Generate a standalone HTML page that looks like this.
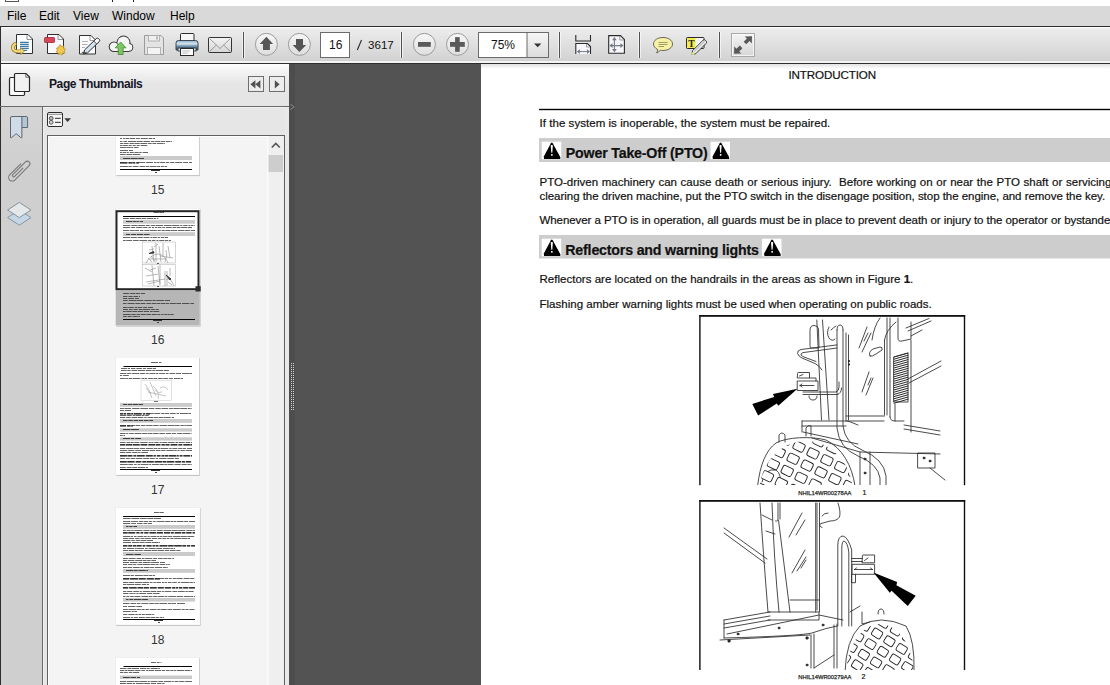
<!DOCTYPE html>
<html><head><meta charset="utf-8">
<style>
*{box-sizing:border-box}
html,body{margin:0;padding:0}
body{width:1110px;height:685px;overflow:hidden;position:relative;background:#fff;font-family:"Liberation Sans",sans-serif;color:#000}
.a{position:absolute}
#title{left:0;top:0;width:1110px;height:6px;background:#fff}
#menu{left:0;top:6px;width:1110px;height:20px;background:#d9d9d9}
.mi{position:absolute;top:4px;font-size:12px;line-height:12px;color:#000}
#tb{left:0;top:26px;width:1110px;height:38px;border-top:1px solid #2e2e2e;border-bottom:1px solid #2e2e2e;border-left:1px solid #2e2e2e;background:linear-gradient(#fafafa 0,#fafafa 1px,#ececec 2px,#e2e2e2 40%,#d2d2d2 95%,#f4f4f4 95%)}
.sep{position:absolute;top:32px;width:1px;height:25px;background:#3c3c3c}
#doc{left:289px;top:64px;width:192px;height:621px;background:#535353}
#page{left:481px;top:64px;width:629px;height:621px;background:#fff}
#panel{left:0;top:64px;width:289px;height:621px;background:#e6e6e6;border-left:1px solid #2e2e2e}
#nav{left:1px;top:107px;width:41px;height:578px;background:linear-gradient(#d6d6d6,#cfcfcf 60px)}
.t{position:absolute;white-space:pre;font-size:11.5px;line-height:12px;color:#111;-webkit-text-stroke:0.2px #111}
</style></head><body>
<div id="title" class="a"></div>
<div class="a" style="left:5px;top:-10px;width:14px;height:12px;border:1px solid #555"></div>
<div class="a" style="left:112px;top:0;width:1px;height:2px;background:#222"></div>
<div class="a" style="left:133px;top:0;width:1px;height:2px;background:#222"></div>

<div id="menu" class="a">
 <span class="mi" style="left:7px">File</span>
 <span class="mi" style="left:39px">Edit</span>
 <span class="mi" style="left:73px">View</span>
 <span class="mi" style="left:112px">Window</span>
 <span class="mi" style="left:170px">Help</span>
</div>

<div id="tb" class="a"></div>
<svg class="a" style="left:0;top:0" width="1110" height="64" viewBox="0 0 1110 64">
<defs>
<linearGradient id="gcirc" x1="0" y1="0" x2="0" y2="1"><stop offset="0" stop-color="#f7f7f7"/><stop offset="1" stop-color="#dedede"/></linearGradient>
<linearGradient id="gdd" x1="0" y1="0" x2="0" y2="1"><stop offset="0" stop-color="#f6f6f6"/><stop offset="1" stop-color="#dcdcdc"/></linearGradient>
<linearGradient id="gprn" x1="0" y1="0" x2="0" y2="1"><stop offset="0" stop-color="#8aa9c2"/><stop offset="0.35" stop-color="#d8e6f0"/><stop offset="0.6" stop-color="#6d90ad"/><stop offset="1" stop-color="#3f5e78"/></linearGradient>
<linearGradient id="gfs" x1="0" y1="0" x2="0" y2="1"><stop offset="0" stop-color="#f4f4f4"/><stop offset="1" stop-color="#d6d6d6"/></linearGradient>
</defs>
<!-- icon1 create -->
<path d="M16.5 34.5 H28 L32.5 39 V53.5 H16.5 Z" fill="#fbfdff" stroke="#2f2f2f" stroke-width="1"/>
<path d="M27 35 V39.5 H32" fill="none" stroke="#777" stroke-width="0.8"/>
<g stroke="#3d7aa8" stroke-width="1.3"><path d="M20 42.3H28.8M20 44.4H28.8M20 46.4H28.8M20 48.4H28.8M23 50.3H27"/></g>
<path d="M15 44 Q11.9 46.6 13.4 49.5 Q15 52 20 51.3" fill="none" stroke="#a08032" stroke-width="3.8" stroke-linecap="round"/>
<path d="M15 44 Q11.9 46.6 13.4 49.5 Q15 52 20 51.3" fill="none" stroke="#f4d87c" stroke-width="2.2" stroke-linecap="round"/>
<path d="M24.4 51 L20.4 47.6 L20.9 54.6 Z" fill="#f4d87c" stroke="#a08032" stroke-width="0.8" stroke-linejoin="round"/>
<path d="M19.4 51.4 L21.2 51.2" stroke="#f4d87c" stroke-width="2.2"/>
<!-- icon2 pdf -->
<path d="M47.5 34.5 H59 L63.5 39 V53.5 H47.5 Z" fill="#fbfbff" stroke="#2f2f2f" stroke-width="1"/>
<path d="M58 35 V39.5 H63" fill="none" stroke="#777" stroke-width="0.8"/>
<rect x="44.5" y="37.5" width="10" height="5" rx="0.8" fill="#d9465c" stroke="#9b2634" stroke-width="0.8"/>
<path d="M60.4 44.8 L61.6 46.6 L63.8 46 L63.6 48.2 L65.6 49.4 L64.1 51 L64.9 53.1 L62.7 53.2 L61.8 55.3 L60.4 53.7 L58.4 54.7 L58.1 52.5 L56 51.8 L57.4 50.1 L56.5 48 L58.7 47.8 L59.1 45.6 Z" fill="#f2c94c" stroke="#b08a2c" stroke-width="0.7"/>
<!-- icon3 edit -->
<path d="M79.5 35.5 H91 L95.5 40 V54 H79.5 Z" fill="#fbfbfb" stroke="#333" stroke-width="1"/>
<path d="M90 36 V40.5 H95" fill="none" stroke="#888" stroke-width="0.8"/>
<g stroke="#a0a0a0" stroke-width="0.8"><path d="M82 41.5H88M82 44.5H87.5M82 47.5H85"/></g>
<path d="M84.5 50 L96.3 38.6 Q97.5 37.6 98.6 38.7 L99.3 39.4 Q100.3 40.5 99.2 41.6 L87.4 53 L83.6 54 Z" fill="#d3e3f0"/>
<path d="M93.8 41 L96.3 38.6 Q97.5 37.6 98.6 38.7 L99.3 39.4 Q100.3 40.5 99.2 41.6 L96.7 44 Z" fill="#fafafa"/>
<path d="M84.5 50 L96.3 38.6 Q97.5 37.6 98.6 38.7 L99.3 39.4 Q100.3 40.5 99.2 41.6 L87.4 53 L83.6 54 Z" fill="none" stroke="#252a30" stroke-width="1"/>
<path d="M93.8 41 L96.7 44" stroke="#252a30" stroke-width="0.8"/>
<path d="M81.8 52.8 Q83 51.5 84 52.6 Q85 53.6 86.5 52" fill="none" stroke="#333" stroke-width="0.9"/>
<!-- icon4 cloud -->
<g fill="#3a3a3a"><circle cx="114" cy="46.8" r="5.3"/><circle cx="123.5" cy="42.6" r="7"/><circle cx="129" cy="47.4" r="4.3"/><rect x="114" y="46" width="15" height="6"/></g>
<g fill="#f5f5f5"><circle cx="114" cy="46.8" r="4.3"/><circle cx="123.5" cy="42.6" r="6"/><circle cx="129" cy="47.4" r="3.3"/><rect x="114" y="45" width="15" height="6"/></g>
<path d="M120.6 42 L126 47.8 H123.1 V54.5 H118.2 V47.8 H115.2 Z" fill="#7cc560" stroke="#3f8a2e" stroke-width="0.8"/>
<!-- icon5 floppy -->
<path d="M144.5 35.5 H161 L163.5 38 V54.5 H144.5 Z" fill="#e3e3e3" stroke="#9b9b9b" stroke-width="1"/>
<rect x="148.5" y="35.5" width="11" height="5.5" fill="#efefef" stroke="#a5a5a5" stroke-width="0.8"/>
<rect x="156" y="36.5" width="2" height="3" fill="#b5b5b5"/>
<rect x="147.5" y="47.5" width="13" height="7" fill="#f3f3f3" stroke="#a5a5a5" stroke-width="0.8"/>
<!-- icon6 printer -->
<rect x="180.5" y="33.5" width="13.5" height="9" rx="1" fill="#f6f6f6" stroke="#2c2c2c" stroke-width="1"/>
<path d="M178.5 40.5 H195.5 Q198 40.5 198 43 V50 H176 V43 Q176 40.5 178.5 40.5 Z" fill="url(#gprn)" stroke="#2c3a46" stroke-width="0.9"/>
<rect x="178" y="48" width="18" height="3" fill="#dfe6ec" stroke="#2c2c2c" stroke-width="0.8"/>
<rect x="180.5" y="48.5" width="13" height="7" fill="#fafafa" stroke="#2c2c2c" stroke-width="1"/>
<path d="M182.5 51H190M182.5 53H188" stroke="#9a9a9a" stroke-width="0.6"/>
<!-- icon7 mail -->
<rect x="208.5" y="37.5" width="23" height="15" rx="1" fill="url(#gfs)" stroke="#333" stroke-width="1"/>
<path d="M209.5 38.5 L220 48.5 L230.5 38.5 M209.5 51.5 L216.5 45 M230.5 51.5 L223.5 45" fill="none" stroke="#888" stroke-width="0.8"/>
<!-- sep -->
<rect x="242" y="32" width="3" height="26" fill="#f8f8f8" fill-opacity="0.8"/><rect x="243" y="32" width="1" height="26" fill="#505050"/>
<!-- up/down circles -->
<circle cx="266.4" cy="44.4" r="11" fill="url(#gcirc)" stroke="#9b9b9b" stroke-width="1"/>
<path d="M266.4 36.7 L273.1 44 H269.9 V50 H263 V44 H259.7 Z" fill="#565656"/>
<circle cx="299.4" cy="44.4" r="11" fill="url(#gcirc)" stroke="#9b9b9b" stroke-width="1"/>
<path d="M296 39 H303 V45 H306.2 L299.4 52 L292.7 45 H296 Z" fill="#565656"/>
<!-- page box -->
<rect x="320.5" y="32.5" width="29" height="25" fill="#fff" stroke="#6b6b6b" stroke-width="1"/>
<!-- sep -->
<rect x="400" y="32" width="3" height="26" fill="#f8f8f8" fill-opacity="0.8"/><rect x="401" y="32" width="1" height="26" fill="#505050"/>
<!-- minus/plus -->
<circle cx="424.4" cy="44.4" r="11" fill="url(#gcirc)" stroke="#9b9b9b" stroke-width="1"/>
<rect x="418" y="42" width="12.8" height="4.8" fill="#5a5a5a"/>
<circle cx="457.5" cy="44.4" r="11" fill="url(#gcirc)" stroke="#9b9b9b" stroke-width="1"/>
<rect x="450" y="42" width="14.8" height="4.8" fill="#5a5a5a"/>
<rect x="455.1" y="37.1" width="4.6" height="14.7" fill="#5a5a5a"/>
<!-- zoom box -->
<rect x="478.5" y="32.5" width="70" height="25" fill="#fff" stroke="#6b6b6b" stroke-width="1"/>
<rect x="527" y="33" width="21" height="24" fill="url(#gdd)"/>
<rect x="526.5" y="33" width="1" height="24" fill="#6b6b6b"/>
<path d="M534 43.4 H541.4 L537.7 47.2 Z" fill="#333"/>
<!-- sep -->
<rect x="558" y="32" width="3" height="26" fill="#f8f8f8" fill-opacity="0.8"/><rect x="559" y="32" width="1" height="26" fill="#505050"/>
<!-- fit width -->
<path d="M575.8 35 V41 H590.5 V35" fill="none" stroke="#2a2a2a" stroke-width="1.1"/>
<path d="M575.8 54 V43.5 H587.5 L590.5 46.5 V54" fill="#f7f7fb" stroke="#2a2a2a" stroke-width="1.1"/>
<path d="M586.5 44 V47 H590" fill="none" stroke="#777" stroke-width="0.7"/>
<path d="M579 51.6 H588" stroke="#737a88" stroke-width="1"/>
<path d="M576.8 51.6 L579.8 49.2 V54 Z M590 51.6 L587 49.2 V54 Z" fill="#737a88"/>
<!-- fit page -->
<path d="M608.7 35.6 H620.5 L624.4 39.5 V53.3 H608.7 Z" fill="#f7f7fb" stroke="#2a2a2a" stroke-width="1.1"/>
<path d="M619.8 36 V40 H624" fill="none" stroke="#777" stroke-width="0.7"/>
<path d="M614.4 39 V50.5 M611 45.6 H622" stroke="#737a88" stroke-width="1.1" fill="none"/>
<path d="M614.4 37 L616.8 40.2 H612 Z M614.4 52.2 L616.8 49 H612 Z M609.3 45.6 L612.5 43.2 V48 Z M623.6 45.6 L620.4 43.2 V48 Z" fill="#737a88"/>
<!-- sep -->
<rect x="638" y="32" width="3" height="26" fill="#f8f8f8" fill-opacity="0.8"/><rect x="639" y="32" width="1" height="26" fill="#505050"/>
<!-- comment -->
<path d="M663 37.5 C668.5 37.5 672.5 40.3 672.5 44 C672.5 47.7 668.5 50.5 663 50.5 C662 50.5 661 50.4 660.2 50.2 Q658.5 52.8 656.6 52.8 Q657.8 51 657.8 49.6 C655 48.2 653.5 46.2 653.5 44 C653.5 40.3 657.5 37.5 663 37.5 Z" fill="#f6f1a6" stroke="#5a5a4a" stroke-width="0.9"/>
<path d="M658.5 42.5 H667.5 M658.5 44.5 H667.5 M658.5 46.5 H664" stroke="#8a8a50" stroke-width="0.8"/>
<!-- sign -->
<rect x="686.5" y="37.5" width="17.5" height="11" rx="0.8" fill="#f6f6f6" stroke="#2a2a2a" stroke-width="1"/>
<rect x="687" y="38" width="8.5" height="10" fill="#f4ec4c"/>
<text x="688.3" y="46.6" font-family="Liberation Serif" font-weight="bold" font-size="9.5" fill="#222">T</text>
<path d="M692.6 50.6 L703 40.2 Q704.3 39.2 705.4 40.3 L706.2 41.1 Q707.2 42.2 706.2 43.3 L695.8 53.7 L692 54.6 Z" fill="#e6e6e6" stroke="#2e2e2e" stroke-width="0.9"/>
<path d="M694 51.6 L704.5 41.2" stroke="#9a9a9a" stroke-width="0.7"/>
<circle cx="693" cy="53.4" r="1.5" fill="#d2e77a"/>
<!-- sep -->
<rect x="718" y="32" width="3" height="26" fill="#f8f8f8" fill-opacity="0.8"/><rect x="719" y="32" width="1" height="26" fill="#505050"/>
<!-- fullscreen -->
<rect x="731.5" y="33.5" width="23" height="23" fill="url(#gfs)" stroke="#a8a8a8" stroke-width="1"/>
<rect x="732.5" y="34.5" width="21" height="21" fill="none" stroke="#fafafa" stroke-width="0.8"/>
<path d="M752 36.2 L751.8 43.4 L749.5 41.1 L746.3 44.3 L743.7 41.7 L746.9 38.5 L744.7 36.4 Z" fill="#585858"/>
<path d="M734.1 53.7 L734.3 46.5 L736.6 48.8 L739.8 45.6 L742.4 48.2 L739.2 51.4 L741.4 53.5 Z" fill="#585858"/>
</svg>
<span class="a" style="left:329px;top:38px;font-size:12px;line-height:14px;color:#111">16</span>
<svg class="a" style="left:355px;top:38px" width="8" height="14" viewBox="355 38 8 14"><path d="M361.5 40 L357.3 50" stroke="#222" stroke-width="1.05"/></svg>
<span class="a" style="left:368px;top:38px;font-size:11.6px;line-height:14px;color:#111">3617</span>
<span class="a" style="left:491px;top:38px;font-size:12px;line-height:14px;color:#111">75%</span>

<div id="panel" class="a"></div>
<div class="a" style="left:1px;top:64px;width:288px;height:42px;background:linear-gradient(#fdfdfd 0,#f2f2f2 8px,#e6e6e6 20px,#e4e4e4 100%)"></div>
<div class="a" style="left:0;top:106px;width:289px;height:1px;background:#6a6a6a"></div>
<div class="a" style="left:43px;top:107px;width:246px;height:1px;background:#f2f2f2"></div>
<div id="nav" class="a"></div>
<div class="a" style="left:42px;top:106px;width:1px;height:579px;background:#6a6a6a"></div>
<div class="a" style="left:43px;top:107px;width:1px;height:578px;background:#f0f0f0"></div>
<svg class="a" style="left:0;top:64px" width="289" height="621" viewBox="0 64 289 621">
<!-- page thumbnails header icon -->
<rect x="9.5" y="77.5" width="15" height="18" rx="1.2" fill="#fafafa" stroke="#262626" stroke-width="1.2"/>
<path d="M15.5 73.5 H26 L29.5 77 V90.5 Q29.5 91.5 28.5 91.5 H15.5 Q14.5 91.5 14.5 90.5 V74.5 Q14.5 73.5 15.5 73.5 Z" fill="#f2f2f2" stroke="#262626" stroke-width="1.2"/>
<path d="M25.8 74 V77.3 H29" fill="none" stroke="#555" stroke-width="0.8"/>
<!-- header buttons -->
<rect x="248.5" y="76.5" width="15" height="15" fill="#ececec" stroke="#6e6e6e" stroke-width="1"/>
<path d="M255.4 80.2 V88.4 L250.4 84.3 Z M260.4 80.2 V88.4 L255.4 84.3 Z" fill="#505050"/>
<rect x="269.5" y="76.5" width="15" height="15" fill="#ececec" stroke="#6e6e6e" stroke-width="1"/>
<path d="M274.8 80.2 V88.4 L279.6 84.3 Z" fill="#505050"/>
<!-- options icon -->
<rect x="47.5" y="112.5" width="15" height="14" rx="1.5" fill="#f7f7f7" stroke="#2e2e2e" stroke-width="1"/>
<path d="M48 114.3 H62" stroke="#8a8a8a" stroke-width="1"/>
<circle cx="51.2" cy="118.3" r="1.9" fill="#bdbdbd" stroke="#3a3a3a" stroke-width="0.8"/>
<circle cx="51.2" cy="122.3" r="1.9" fill="#d5d5d5" stroke="#3a3a3a" stroke-width="0.8"/>
<path d="M55 118.3 H60.8 M55 122.3 H60.8" stroke="#2a2a2a" stroke-width="1"/>
<path d="M64.3 118.2 H71 L67.6 121.9 Z" fill="#3a3a3a"/>
<!-- nav icons: bookmark -->
<path d="M21.5 116.5 H26.2 Q27.6 116.5 27.6 118 V127.5 H21.5 Z" fill="#b3c6d4" stroke="#5f676e" stroke-width="1"/>
<path d="M10.5 118 Q10.5 116.5 12 116.5 H21.9 V137 Q21.9 138.5 20.8 137.6 L16.6 134 Q16.2 133.7 15.8 134 L11.6 137.6 Q10.5 138.5 10.5 137 Z" fill="#cddce7" stroke="#5f676e" stroke-width="1"/>
<!-- paperclip -->
<g transform="translate(19.3 170.4) rotate(45)" fill="none" stroke="#767676" stroke-width="1.05">
<path d="M-3.6 -6 V10 A3.6 3.6 0 0 0 3.6 10 V-10.3 A2.6 2.6 0 0 0 -1.6 -10.3 V7.6 A1.3 1.3 0 0 0 1 7.6 V-4.5"/>
</g>
<!-- layers -->
<path d="M19.3 210 L31 217.6 L19.3 225.2 L7.6 217.6 Z" fill="#c5d7e4" stroke="#7e919e" stroke-width="0.9"/>
<path d="M19.3 202.4 L31 210 L19.3 217.6 L7.6 210 Z" fill="#e6eaec" fill-opacity="0.92" stroke="#7d8a92" stroke-width="0.9"/>
<!-- thumbnails box -->
<rect x="47.5" y="135.5" width="237" height="560" fill="#f4f4f4" stroke="#5f5f5f" stroke-width="1"/>
<path d="M48.5 136.5 H284 M48.5 136.5 V685" stroke="#fff" stroke-width="1"/>
<rect x="268" y="136" width="16" height="549" fill="#efefef"/>
<rect x="267.5" y="136" width="1" height="549" fill="#ffffff"/>
<path d="M271.8 147.5 L275.8 143.5 L279.8 147.5" fill="none" stroke="#555" stroke-width="1.6"/>
<rect x="268.5" y="155" width="14.5" height="17" fill="#cdcdcd"/>
<!-- splitter strip -->
<rect x="285" y="107" width="4" height="578" fill="#e8e8e8"/>
</svg>
<svg class="a" style="left:48px;top:137px" width="220" height="548" viewBox="48 137 220 548"><rect x="116.3" y="58.8" width="83.5" height="117.3" fill="#bdbdbd"/><rect x="115.5" y="57.7" width="83.8" height="117.6" fill="#dedede"/><rect x="115.8" y="58" width="83.2" height="117" fill="#fff"/><g fill="#1e1e1e" fill-opacity="0.68"><rect x="120.0" y="136" width="4.7" height="1.0"/><rect x="125.6" y="136" width="7.1" height="1.0"/><rect x="133.5" y="136" width="4.7" height="1.0"/><rect x="139.1" y="136" width="3.1" height="1.0"/><rect x="143.1" y="136" width="4.9" height="1.0"/><rect x="148.9" y="136" width="6.8" height="1.0"/><rect x="156.1" y="136" width="4.7" height="1.0"/><rect x="161.3" y="136" width="2.5" height="1.0"/><rect x="164.7" y="136" width="5.8" height="1.0"/><rect x="171.4" y="136" width="7.9" height="1.0"/><rect x="180.0" y="136" width="5.9" height="1.0"/><rect x="186.9" y="136" width="5.1" height="1.0"/></g><g fill="#1e1e1e" fill-opacity="0.68"><rect x="120.0" y="138" width="2.1" height="1.0"/><rect x="123.0" y="138" width="2.4" height="1.0"/><rect x="125.9" y="138" width="3.1" height="1.0"/><rect x="129.5" y="138" width="5.6" height="1.0"/><rect x="135.8" y="138" width="4.0" height="1.0"/><rect x="140.7" y="138" width="7.1" height="1.0"/><rect x="148.6" y="138" width="3.4" height="1.0"/><rect x="152.7" y="138" width="2.3" height="1.0"/></g><g fill="#1e1e1e" fill-opacity="0.68"><rect x="120.0" y="141" width="2.5" height="1.0"/><rect x="123.4" y="141" width="3.7" height="1.0"/><rect x="128.0" y="141" width="8.0" height="1.0"/><rect x="136.5" y="141" width="6.2" height="1.0"/><rect x="143.4" y="141" width="6.5" height="1.0"/><rect x="150.8" y="141" width="3.7" height="1.0"/><rect x="155.1" y="141" width="5.4" height="1.0"/><rect x="161.0" y="141" width="4.4" height="1.0"/><rect x="166.1" y="141" width="4.3" height="1.0"/><rect x="170.9" y="141" width="1.1" height="1.0"/></g><g fill="#1e1e1e" fill-opacity="0.68"><rect x="120.0" y="143" width="3.3" height="1.0"/><rect x="123.8" y="143" width="4.8" height="1.0"/><rect x="129.5" y="143" width="4.4" height="1.0"/><rect x="134.4" y="143" width="5.4" height="1.0"/><rect x="140.3" y="143" width="6.7" height="1.0"/><rect x="147.7" y="143" width="4.0" height="1.0"/><rect x="152.4" y="143" width="4.0" height="1.0"/><rect x="157.1" y="143" width="6.5" height="1.0"/><rect x="164.1" y="143" width="0.9" height="1.0"/></g><g fill="#1e1e1e" fill-opacity="0.68"><rect x="120.0" y="145" width="2.6" height="1.0"/><rect x="123.1" y="145" width="4.8" height="1.0"/><rect x="128.6" y="145" width="3.1" height="1.0"/><rect x="132.6" y="145" width="3.1" height="1.0"/><rect x="136.6" y="145" width="3.1" height="1.0"/><rect x="140.6" y="145" width="6.6" height="1.0"/></g><g fill="#1e1e1e" fill-opacity="0.68"><rect x="120.0" y="147" width="5.9" height="1.0"/><rect x="126.4" y="147" width="4.4" height="1.0"/><rect x="131.2" y="147" width="2.0" height="1.0"/><rect x="134.1" y="147" width="3.8" height="1.0"/><rect x="138.5" y="147" width="0.5" height="1.0"/></g><g fill="#1e1e1e" fill-opacity="0.68"><rect x="120.0" y="150" width="8.0" height="1.0"/><rect x="128.9" y="150" width="4.1" height="1.0"/></g><g fill="#1e1e1e" fill-opacity="0.68"><rect x="120.0" y="152" width="2.3" height="1.0"/><rect x="122.8" y="152" width="3.3" height="1.0"/><rect x="126.7" y="152" width="2.1" height="1.0"/><rect x="129.7" y="152" width="4.0" height="1.0"/><rect x="134.4" y="152" width="4.3" height="1.0"/><rect x="139.2" y="152" width="2.5" height="1.0"/><rect x="142.6" y="152" width="5.4" height="1.0"/></g><g fill="#1e1e1e" fill-opacity="0.68"><rect x="120.0" y="154" width="5.6" height="1.0"/><rect x="126.3" y="154" width="5.7" height="1.0"/><rect x="132.5" y="154" width="7.8" height="1.0"/></g><rect x="120" y="156" width="72" height="4.0" fill="#cacaca"/><g fill="#111" fill-opacity="0.75"><rect x="123.0" y="158" width="7.0" height="1.0"/><rect x="130.5" y="158" width="7.2" height="1.0"/><rect x="138.2" y="158" width="5.8" height="1.0"/></g><g fill="#000" fill-opacity="0.8"><rect x="120.0" y="162" width="7.5" height="1.6"/><rect x="128.4" y="162" width="3.5" height="1.6"/><rect x="132.3" y="162" width="3.0" height="1.6"/><rect x="136.2" y="162" width="2.8" height="1.6"/></g><g fill="#1e1e1e" fill-opacity="0.68"><rect x="139.0" y="162" width="6.1" height="1.0"/><rect x="145.8" y="162" width="7.3" height="1.0"/><rect x="154.0" y="162" width="2.5" height="1.0"/><rect x="157.0" y="162" width="2.6" height="1.0"/><rect x="160.1" y="162" width="5.1" height="1.0"/><rect x="165.9" y="162" width="3.4" height="1.0"/><rect x="170.2" y="162" width="4.3" height="1.0"/><rect x="175.3" y="162" width="6.9" height="1.0"/><rect x="183.1" y="162" width="4.9" height="1.0"/><rect x="189.0" y="162" width="3.0" height="1.0"/></g><g fill="#1e1e1e" fill-opacity="0.68"><rect x="120.0" y="166" width="7.9" height="1.0"/><rect x="128.4" y="166" width="3.4" height="1.0"/><rect x="132.6" y="166" width="5.9" height="1.0"/><rect x="139.5" y="166" width="5.7" height="1.0"/><rect x="145.8" y="166" width="3.3" height="1.0"/><rect x="149.6" y="166" width="6.5" height="1.0"/><rect x="156.6" y="166" width="3.6" height="1.0"/><rect x="160.9" y="166" width="3.5" height="1.0"/><rect x="164.9" y="166" width="2.1" height="1.0"/></g><rect x="120" y="169" width="72" height="1" fill="#050505"/><rect x="151" y="170" width="9" height="1" fill="#333"/><rect x="155" y="172" width="2" height="1" fill="#444"/><rect x="116.3" y="209.3" width="84.3" height="117.3" fill="#bdbdbd"/><rect x="115.5" y="208.2" width="84.6" height="117.6" fill="#dedede"/><rect x="115.8" y="208.5" width="84" height="117" fill="#fff"/><rect x="115.8" y="290.4" width="84" height="35.1" fill="#b6b6b6"/><g fill="#1e1e1e" fill-opacity="0.68"><rect x="153.6" y="212" width="5.2" height="1"/><rect x="159.3" y="212" width="2.6" height="1"/><rect x="162.3" y="212" width="1.7" height="1"/></g><rect x="123" y="216" width="72" height="1" fill="#050505"/><g fill="#1e1e1e" fill-opacity="0.68"><rect x="123.0" y="218" width="5.9" height="1.0"/><rect x="129.8" y="218" width="5.1" height="1.0"/><rect x="135.5" y="218" width="5.5" height="1.0"/><rect x="141.5" y="218" width="4.8" height="1.0"/><rect x="147.1" y="218" width="6.2" height="1.0"/><rect x="153.8" y="218" width="2.1" height="1.0"/><rect x="156.8" y="218" width="1.6" height="1.0"/></g><rect x="123" y="220.1" width="72" height="3.6" fill="#cacaca"/><g fill="#111" fill-opacity="0.75"><rect x="126.0" y="221" width="6.4" height="1.0"/><rect x="133.1" y="221" width="2.8" height="1.0"/><rect x="136.4" y="221" width="2.5" height="1.0"/><rect x="139.8" y="221" width="3.2" height="1.0"/></g><g fill="#1e1e1e" fill-opacity="0.68"><rect x="123.0" y="225" width="7.4" height="1.0"/><rect x="131.3" y="225" width="6.4" height="1.0"/><rect x="138.2" y="225" width="6.8" height="1.0"/><rect x="145.7" y="225" width="4.1" height="1.0"/><rect x="150.7" y="225" width="4.8" height="1.0"/><rect x="156.0" y="225" width="7.2" height="1.0"/><rect x="164.0" y="225" width="7.7" height="1.0"/><rect x="172.1" y="225" width="7.2" height="1.0"/><rect x="180.2" y="225" width="2.1" height="1.0"/><rect x="183.2" y="225" width="4.3" height="1.0"/><rect x="188.4" y="225" width="2.1" height="1.0"/><rect x="191.0" y="225" width="2.5" height="1.0"/><rect x="194.3" y="225" width="0.7" height="1.0"/></g><g fill="#1e1e1e" fill-opacity="0.68"><rect x="123.0" y="227" width="7.3" height="1.0"/><rect x="131.2" y="227" width="4.0" height="1.0"/><rect x="136.1" y="227" width="6.2" height="1.0"/><rect x="142.9" y="227" width="4.6" height="1.0"/><rect x="148.5" y="227" width="2.5" height="1.0"/><rect x="151.9" y="227" width="2.2" height="1.0"/><rect x="154.9" y="227" width="2.5" height="1.0"/><rect x="158.0" y="227" width="3.4" height="1.0"/><rect x="162.3" y="227" width="2.7" height="1.0"/><rect x="165.8" y="227" width="6.0" height="1.0"/><rect x="172.5" y="227" width="3.5" height="1.0"/><rect x="176.5" y="227" width="4.2" height="1.0"/><rect x="181.2" y="227" width="6.1" height="1.0"/><rect x="187.8" y="227" width="4.2" height="1.0"/></g><g fill="#1e1e1e" fill-opacity="0.68"><rect x="123.0" y="230" width="6.0" height="1.0"/><rect x="129.7" y="230" width="5.0" height="1.0"/><rect x="135.1" y="230" width="4.0" height="1.0"/><rect x="140.0" y="230" width="3.5" height="1.0"/><rect x="144.4" y="230" width="4.6" height="1.0"/><rect x="149.5" y="230" width="7.3" height="1.0"/><rect x="157.5" y="230" width="3.3" height="1.0"/><rect x="161.5" y="230" width="3.3" height="1.0"/><rect x="165.3" y="230" width="5.0" height="1.0"/><rect x="170.7" y="230" width="6.3" height="1.0"/><rect x="177.7" y="230" width="6.9" height="1.0"/><rect x="185.1" y="230" width="4.7" height="1.0"/><rect x="190.5" y="230" width="4.5" height="1.0"/></g><rect x="123" y="232.2" width="72" height="3.8" fill="#cacaca"/><g fill="#111" fill-opacity="0.75"><rect x="126.0" y="234" width="4.3" height="1.0"/><rect x="131.2" y="234" width="5.0" height="1.0"/><rect x="136.9" y="234" width="6.3" height="1.0"/><rect x="144.1" y="234" width="4.7" height="1.0"/><rect x="149.3" y="234" width="0.7" height="1.0"/></g><g fill="#1e1e1e" fill-opacity="0.68"><rect x="123.0" y="237" width="7.2" height="1.0"/><rect x="130.7" y="237" width="6.1" height="1.0"/><rect x="137.5" y="237" width="5.4" height="1.0"/><rect x="143.6" y="237" width="5.9" height="1.0"/><rect x="150.4" y="237" width="2.1" height="1.0"/><rect x="153.0" y="237" width="4.4" height="1.0"/><rect x="158.0" y="237" width="2.1" height="1.0"/><rect x="160.8" y="237" width="3.4" height="1.0"/><rect x="164.7" y="237" width="3.3" height="1.0"/></g><g fill="#1e1e1e" fill-opacity="0.68"><rect x="123.0" y="240" width="2.7" height="1.0"/><rect x="126.2" y="240" width="5.8" height="1.0"/><rect x="132.9" y="240" width="5.8" height="1.0"/><rect x="139.4" y="240" width="7.8" height="1.0"/><rect x="148.1" y="240" width="3.2" height="1.0"/><rect x="152.0" y="240" width="3.5" height="1.0"/><rect x="156.4" y="240" width="2.1" height="1.0"/><rect x="159.2" y="240" width="5.2" height="1.0"/><rect x="164.9" y="240" width="3.1" height="1.0"/><rect x="168.6" y="240" width="2.4" height="1.0"/></g><rect x="142.2" y="242" width="33.5" height="21" fill="#fff" stroke="#aaa" stroke-width="0.5"/><rect x="142.2" y="264.3" width="33.5" height="21.7" fill="#fff" stroke="#aaa" stroke-width="0.5"/><g stroke="#9a9a9a" stroke-width="0.7" fill="none"><path d="M156 243 V262 M152 246 L154 262 M163 243 L163 256 M168 246 L170 258 M146 263 Q150 255 158 254 Q165 255 168 263 M160 256 L173 258 M149 250 L154 249 M148 258 L152 262 M151 256 L155 261 M159 246 L161 262 M166 250 Q168 256 165 262 M150 259 H166 M154 247 L158 244"/></g><path d="M149 253.5 L153.5 251.5 L154 253 Z" fill="#333" stroke="#333" stroke-width="0.9"/><g stroke="#9a9a9a" stroke-width="0.7" fill="none"><path d="M145 268 L152 272 M152 265 L154 286 M160 265 V284 M165 271 V286 M167 271 V286 M146 282 L165 279 M166 280 Q170 276 174 286 M168 282 L172 285 M148 284 L160 281 M158 266 L160 285 M150 270 L156 268 M146 276 L158 274 M170 268 V276"/></g><path d="M166 275 L171 279 L170 280 Z" fill="#333" stroke="#333" stroke-width="0.9"/><rect x="157" y="263" width="2" height="1" fill="#555"/><rect x="157" y="286" width="2" height="1" fill="#555"/><g fill="#1e1e1e" fill-opacity="0.68"><rect x="123.0" y="293" width="6.2" height="1.0"/><rect x="130.1" y="293" width="5.0" height="1.0"/><rect x="135.6" y="293" width="4.4" height="1.0"/><rect x="140.8" y="293" width="4.2" height="1.0"/></g><g fill="#1e1e1e" fill-opacity="0.68"><rect x="123.0" y="296" width="4.5" height="1.0"/><rect x="128.4" y="296" width="4.3" height="1.0"/><rect x="133.4" y="296" width="4.7" height="1.0"/><rect x="139.0" y="296" width="1.0" height="1.0"/></g><g fill="#1e1e1e" fill-opacity="0.68"><rect x="123.0" y="298" width="4.3" height="1.0"/><rect x="128.2" y="298" width="5.9" height="1.0"/><rect x="135.0" y="298" width="4.0" height="1.0"/></g><g fill="#1e1e1e" fill-opacity="0.68"><rect x="123.0" y="300" width="4.8" height="1.0"/><rect x="128.7" y="300" width="7.9" height="1.0"/><rect x="137.1" y="300" width="6.3" height="1.0"/><rect x="144.3" y="300" width="7.5" height="1.0"/><rect x="152.4" y="300" width="3.3" height="1.0"/><rect x="156.3" y="300" width="7.9" height="1.0"/><rect x="164.9" y="300" width="5.2" height="1.0"/></g><g fill="#1e1e1e" fill-opacity="0.68"><rect x="123.0" y="303" width="3.6" height="1.0"/><rect x="127.5" y="303" width="7.1" height="1.0"/><rect x="135.3" y="303" width="5.0" height="1.0"/><rect x="140.8" y="303" width="4.6" height="1.0"/><rect x="146.4" y="303" width="4.5" height="1.0"/><rect x="151.6" y="303" width="4.9" height="1.0"/><rect x="157.0" y="303" width="3.3" height="1.0"/><rect x="160.8" y="303" width="4.6" height="1.0"/><rect x="165.9" y="303" width="3.0" height="1.0"/><rect x="169.7" y="303" width="6.1" height="1.0"/><rect x="176.3" y="303" width="4.8" height="1.0"/><rect x="182.0" y="303" width="7.4" height="1.0"/><rect x="190.3" y="303" width="3.7" height="1.0"/></g><g fill="#1e1e1e" fill-opacity="0.68"><rect x="123.0" y="307" width="4.6" height="1.0"/><rect x="128.3" y="307" width="5.5" height="1.0"/><rect x="134.7" y="307" width="2.5" height="1.0"/><rect x="137.7" y="307" width="4.6" height="1.0"/><rect x="143.3" y="307" width="3.7" height="1.0"/><rect x="147.9" y="307" width="5.1" height="1.0"/></g><g fill="#1e1e1e" fill-opacity="0.68"><rect x="123.0" y="309" width="5.1" height="1.0"/><rect x="129.0" y="309" width="3.5" height="1.0"/><rect x="133.5" y="309" width="4.3" height="1.0"/><rect x="138.7" y="309" width="3.2" height="1.0"/><rect x="142.4" y="309" width="7.8" height="1.0"/><rect x="151.1" y="309" width="3.6" height="1.0"/><rect x="155.5" y="309" width="3.2" height="1.0"/></g><g fill="#1e1e1e" fill-opacity="0.68"><rect x="123.0" y="311" width="2.7" height="1.0"/><rect x="126.2" y="311" width="5.6" height="1.0"/><rect x="132.3" y="311" width="5.2" height="1.0"/><rect x="138.0" y="311" width="5.1" height="1.0"/><rect x="143.8" y="311" width="5.3" height="1.0"/><rect x="150.0" y="311" width="2.7" height="1.0"/><rect x="153.2" y="311" width="6.1" height="1.0"/></g><g fill="#1e1e1e" fill-opacity="0.68"><rect x="123.0" y="314" width="7.6" height="1.0"/><rect x="131.3" y="314" width="4.5" height="1.0"/><rect x="136.5" y="314" width="3.6" height="1.0"/><rect x="140.8" y="314" width="5.0" height="1.0"/><rect x="146.4" y="314" width="4.6" height="1.0"/><rect x="151.7" y="314" width="5.1" height="1.0"/><rect x="157.4" y="314" width="3.1" height="1.0"/><rect x="161.4" y="314" width="2.2" height="1.0"/><rect x="164.3" y="314" width="2.8" height="1.0"/><rect x="167.6" y="314" width="2.2" height="1.0"/><rect x="170.3" y="314" width="3.4" height="1.0"/></g><g fill="#1e1e1e" fill-opacity="0.68"><rect x="123.0" y="316" width="3.7" height="1.0"/><rect x="127.6" y="316" width="4.1" height="1.0"/><rect x="132.6" y="316" width="5.0" height="1.0"/><rect x="138.3" y="316" width="1.7" height="1.0"/></g><rect x="123" y="319" width="72" height="1" fill="#050505"/><rect x="153" y="320" width="9" height="1" fill="#333"/><rect x="157" y="322" width="2" height="1" fill="#444"/><rect x="116.4" y="358.2" width="83.39999999999999" height="117.7" fill="#bdbdbd"/><rect x="115.60000000000001" y="357.09999999999997" width="83.69999999999999" height="118.0" fill="#dedede"/><rect x="115.9" y="357.4" width="83.1" height="117.4" fill="#fff"/><g fill="#1e1e1e" fill-opacity="0.68"><rect x="151.0" y="362" width="7.1" height="1"/><rect x="159.0" y="362" width="2.5" height="1"/></g><rect x="123.5" y="366" width="68.5" height="1" fill="#050505"/><g fill="#1e1e1e" fill-opacity="0.68"><rect x="121.0" y="368" width="6.2" height="1.0"/><rect x="127.9" y="368" width="2.1" height="1.0"/><rect x="130.9" y="368" width="4.5" height="1.0"/><rect x="136.3" y="368" width="5.7" height="1.0"/><rect x="142.9" y="368" width="3.2" height="1.0"/><rect x="147.0" y="368" width="5.2" height="1.0"/><rect x="152.8" y="368" width="3.2" height="1.0"/></g><g fill="#1e1e1e" fill-opacity="0.68"><rect x="121.0" y="370" width="5.7" height="1.0"/><rect x="127.2" y="370" width="3.4" height="1.0"/><rect x="131.5" y="370" width="5.8" height="1.0"/><rect x="137.9" y="370" width="7.4" height="1.0"/><rect x="146.0" y="370" width="5.6" height="1.0"/><rect x="152.2" y="370" width="3.3" height="1.0"/><rect x="156.0" y="370" width="7.3" height="1.0"/><rect x="163.8" y="370" width="5.2" height="1.0"/></g><g fill="#1e1e1e" fill-opacity="0.68"><rect x="120.0" y="373" width="6.4" height="1.0"/><rect x="127.1" y="373" width="4.3" height="1.0"/><rect x="132.1" y="373" width="7.0" height="1.0"/><rect x="139.8" y="373" width="5.3" height="1.0"/><rect x="145.9" y="373" width="2.8" height="1.0"/><rect x="149.4" y="373" width="5.8" height="1.0"/><rect x="155.7" y="373" width="2.6" height="1.0"/><rect x="159.1" y="373" width="6.1" height="1.0"/><rect x="165.9" y="373" width="2.7" height="1.0"/><rect x="169.5" y="373" width="5.8" height="1.0"/><rect x="176.0" y="373" width="5.0" height="1.0"/><rect x="182.0" y="373" width="7.0" height="1.0"/><rect x="189.4" y="373" width="2.6" height="1.0"/></g><g fill="#1e1e1e" fill-opacity="0.68"><rect x="120.0" y="375" width="2.2" height="1.0"/><rect x="123.1" y="375" width="5.7" height="1.0"/></g><g fill="#1e1e1e" fill-opacity="0.68"><rect x="120.0" y="378" width="4.9" height="1.0"/><rect x="125.4" y="378" width="3.1" height="1.0"/><rect x="129.0" y="378" width="3.0" height="1.0"/><rect x="132.5" y="378" width="7.9" height="1.0"/><rect x="141.4" y="378" width="2.6" height="1.0"/><rect x="144.4" y="378" width="2.8" height="1.0"/><rect x="148.1" y="378" width="4.8" height="1.0"/><rect x="153.4" y="378" width="4.0" height="1.0"/><rect x="158.1" y="378" width="4.6" height="1.0"/><rect x="163.3" y="378" width="4.6" height="1.0"/><rect x="168.8" y="378" width="4.2" height="1.0"/><rect x="174.0" y="378" width="6.2" height="1.0"/><rect x="180.7" y="378" width="2.3" height="1.0"/></g><rect x="141" y="380.2" width="30.5" height="20.4" fill="#fff" stroke="#c4c4c4" stroke-width="0.5"/><g stroke="#aaa" stroke-width="0.7" fill="none"><path d="M145 384 Q150 390 152 398 M150 382 L156 396 M153 386 Q160 392 158 399 M160 388 Q165 385 168 390 M148 392 L166 396 M155 390 Q158 394 162 392 M146 388 L151 394"/></g><rect x="154" y="401" width="4" height="1" fill="#777"/><rect x="120" y="403" width="72" height="3.8" fill="#cacaca"/><g fill="#111" fill-opacity="0.75"><rect x="123.0" y="404" width="4.2" height="1.0"/><rect x="127.9" y="404" width="4.4" height="1.0"/><rect x="132.8" y="404" width="5.6" height="1.0"/><rect x="138.9" y="404" width="4.1" height="1.0"/></g><g fill="#1e1e1e" fill-opacity="0.68"><rect x="120.0" y="408" width="3.9" height="1.0"/><rect x="124.4" y="408" width="6.8" height="1.0"/><rect x="132.2" y="408" width="7.3" height="1.0"/><rect x="140.3" y="408" width="7.6" height="1.0"/><rect x="148.8" y="408" width="5.6" height="1.0"/><rect x="155.3" y="408" width="5.5" height="1.0"/><rect x="161.5" y="408" width="6.8" height="1.0"/><rect x="169.1" y="408" width="3.7" height="1.0"/><rect x="173.3" y="408" width="6.5" height="1.0"/><rect x="180.2" y="408" width="6.9" height="1.0"/><rect x="187.8" y="408" width="2.8" height="1.0"/><rect x="191.3" y="408" width="0.7" height="1.0"/></g><g fill="#1e1e1e" fill-opacity="0.68"><rect x="120.0" y="410" width="4.2" height="1.0"/><rect x="124.9" y="410" width="6.1" height="1.0"/></g><g fill="#000" fill-opacity="0.8"><rect x="120.0" y="413" width="3.2" height="1.6"/><rect x="123.7" y="413" width="2.4" height="1.6"/><rect x="126.9" y="413" width="3.8" height="1.6"/><rect x="131.2" y="413" width="2.1" height="1.6"/><rect x="133.9" y="413" width="7.9" height="1.6"/><rect x="142.8" y="413" width="2.3" height="1.6"/><rect x="145.8" y="413" width="4.2" height="1.6"/></g><g fill="#1e1e1e" fill-opacity="0.68"><rect x="150.0" y="413" width="3.8" height="1.0"/><rect x="154.3" y="413" width="6.0" height="1.0"/><rect x="161.2" y="413" width="3.1" height="1.0"/><rect x="164.7" y="413" width="4.3" height="1.0"/><rect x="169.8" y="413" width="5.9" height="1.0"/><rect x="176.5" y="413" width="2.7" height="1.0"/><rect x="180.0" y="413" width="7.9" height="1.0"/><rect x="188.3" y="413" width="2.7" height="1.0"/></g><g fill="#1e1e1e" fill-opacity="0.68"><rect x="120.0" y="415" width="6.4" height="1.0"/><rect x="127.1" y="415" width="4.7" height="1.0"/><rect x="132.7" y="415" width="2.3" height="1.0"/><rect x="135.5" y="415" width="5.9" height="1.0"/><rect x="141.9" y="415" width="2.6" height="1.0"/><rect x="145.2" y="415" width="3.7" height="1.0"/></g><g fill="#1e1e1e" fill-opacity="0.68"><rect x="120.0" y="417" width="5.3" height="1.0"/><rect x="126.2" y="417" width="4.5" height="1.0"/><rect x="131.6" y="417" width="5.4" height="1.0"/><rect x="137.5" y="417" width="5.8" height="1.0"/><rect x="144.2" y="417" width="2.5" height="1.0"/><rect x="147.6" y="417" width="6.0" height="1.0"/><rect x="154.1" y="417" width="4.3" height="1.0"/><rect x="158.9" y="417" width="4.3" height="1.0"/><rect x="163.7" y="417" width="7.1" height="1.0"/><rect x="171.8" y="417" width="2.2" height="1.0"/></g><rect x="120" y="419" width="72" height="3.8" fill="#cacaca"/><g fill="#111" fill-opacity="0.75"><rect x="123.0" y="420" width="4.6" height="1.0"/><rect x="128.3" y="420" width="4.5" height="1.0"/><rect x="133.7" y="420" width="4.4" height="1.0"/><rect x="138.8" y="420" width="4.2" height="1.0"/><rect x="143.7" y="420" width="4.9" height="1.0"/><rect x="149.3" y="420" width="3.7" height="1.0"/></g><g fill="#000" fill-opacity="0.8"><rect x="120.0" y="425" width="6.0" height="1.6"/><rect x="126.9" y="425" width="3.8" height="1.6"/><rect x="131.2" y="425" width="1.8" height="1.6"/></g><g fill="#1e1e1e" fill-opacity="0.68"><rect x="133.0" y="425" width="2.3" height="1.0"/><rect x="135.8" y="425" width="4.5" height="1.0"/><rect x="141.1" y="425" width="4.3" height="1.0"/><rect x="146.1" y="425" width="6.5" height="1.0"/><rect x="153.1" y="425" width="5.5" height="1.0"/><rect x="159.5" y="425" width="7.7" height="1.0"/><rect x="167.7" y="425" width="6.8" height="1.0"/><rect x="175.0" y="425" width="4.6" height="1.0"/><rect x="180.3" y="425" width="3.5" height="1.0"/><rect x="184.3" y="425" width="2.3" height="1.0"/><rect x="187.0" y="425" width="5.0" height="1.0"/></g><rect x="120" y="428.3" width="72" height="3.3" fill="#cacaca"/><g fill="#111" fill-opacity="0.75"><rect x="123.0" y="429" width="7.5" height="1.0"/><rect x="131.0" y="429" width="7.9" height="1.0"/></g><g fill="#1e1e1e" fill-opacity="0.68"><rect x="120.0" y="433" width="5.6" height="1.0"/><rect x="126.1" y="433" width="2.3" height="1.0"/><rect x="129.1" y="433" width="4.7" height="1.0"/><rect x="134.4" y="433" width="7.2" height="1.0"/><rect x="142.2" y="433" width="5.2" height="1.0"/><rect x="147.9" y="433" width="4.2" height="1.0"/><rect x="152.6" y="433" width="6.0" height="1.0"/><rect x="159.3" y="433" width="5.6" height="1.0"/><rect x="165.8" y="433" width="5.5" height="1.0"/><rect x="172.0" y="433" width="4.2" height="1.0"/><rect x="177.1" y="433" width="5.2" height="1.0"/><rect x="182.7" y="433" width="7.7" height="1.0"/><rect x="191.4" y="433" width="0.6" height="1.0"/></g><g fill="#1e1e1e" fill-opacity="0.68"><rect x="120.0" y="435" width="2.7" height="1.0"/><rect x="123.4" y="435" width="1.6" height="1.0"/></g><rect x="120" y="437.3" width="72" height="3.3" fill="#cacaca"/><g fill="#111" fill-opacity="0.75"><rect x="123.0" y="438" width="7.1" height="1.0"/><rect x="130.8" y="438" width="3.6" height="1.0"/><rect x="135.3" y="438" width="5.7" height="1.0"/></g><g fill="#1e1e1e" fill-opacity="0.68"><rect x="120.0" y="442" width="5.6" height="1.0"/><rect x="126.5" y="442" width="3.7" height="1.0"/><rect x="130.6" y="442" width="3.1" height="1.0"/><rect x="134.3" y="442" width="5.0" height="1.0"/><rect x="140.2" y="442" width="7.5" height="1.0"/><rect x="148.6" y="442" width="2.2" height="1.0"/><rect x="151.3" y="442" width="2.1" height="1.0"/><rect x="154.1" y="442" width="4.6" height="1.0"/><rect x="159.5" y="442" width="2.2" height="1.0"/><rect x="162.2" y="442" width="5.2" height="1.0"/><rect x="168.0" y="442" width="6.5" height="1.0"/><rect x="175.4" y="442" width="3.0" height="1.0"/><rect x="178.9" y="442" width="5.8" height="1.0"/><rect x="185.4" y="442" width="4.9" height="1.0"/><rect x="191.0" y="442" width="1.0" height="1.0"/></g><g fill="#000" fill-opacity="0.8"><rect x="120.0" y="444" width="5.0" height="1.6"/><rect x="125.5" y="444" width="7.0" height="1.6"/><rect x="133.0" y="444" width="6.8" height="1.6"/><rect x="140.5" y="444" width="6.9" height="1.6"/><rect x="148.3" y="444" width="7.0" height="1.6"/><rect x="155.8" y="444" width="4.7" height="1.6"/><rect x="161.4" y="444" width="3.5" height="1.6"/><rect x="165.4" y="444" width="4.2" height="1.6"/><rect x="170.5" y="444" width="7.0" height="1.6"/><rect x="178.4" y="444" width="4.0" height="1.6"/><rect x="183.3" y="444" width="6.6" height="1.6"/><rect x="190.3" y="444" width="1.7" height="1.6"/></g><g fill="#1e1e1e" fill-opacity="0.68"><rect x="120.0" y="448" width="5.5" height="1.0"/><rect x="126.2" y="448" width="7.3" height="1.0"/><rect x="133.9" y="448" width="5.3" height="1.0"/><rect x="139.9" y="448" width="5.4" height="1.0"/><rect x="146.0" y="448" width="6.9" height="1.0"/><rect x="153.6" y="448" width="3.8" height="1.0"/><rect x="157.9" y="448" width="2.5" height="1.0"/><rect x="160.8" y="448" width="7.5" height="1.0"/><rect x="169.2" y="448" width="2.5" height="1.0"/><rect x="172.4" y="448" width="5.0" height="1.0"/><rect x="178.2" y="448" width="4.0" height="1.0"/><rect x="182.7" y="448" width="3.3" height="1.0"/><rect x="186.9" y="448" width="5.1" height="1.0"/></g><g fill="#1e1e1e" fill-opacity="0.68"><rect x="120.0" y="450" width="7.4" height="1.0"/><rect x="128.1" y="450" width="6.3" height="1.0"/><rect x="135.3" y="450" width="5.6" height="1.0"/><rect x="141.8" y="450" width="7.5" height="1.0"/><rect x="149.9" y="450" width="5.2" height="1.0"/><rect x="155.8" y="450" width="4.7" height="1.0"/><rect x="161.1" y="450" width="4.4" height="1.0"/><rect x="166.4" y="450" width="7.4" height="1.0"/><rect x="174.2" y="450" width="2.5" height="1.0"/><rect x="177.4" y="450" width="2.1" height="1.0"/><rect x="180.5" y="450" width="4.4" height="1.0"/><rect x="185.6" y="450" width="6.4" height="1.0"/></g><g fill="#1e1e1e" fill-opacity="0.68"><rect x="120.0" y="452" width="5.4" height="1.0"/><rect x="126.1" y="452" width="5.2" height="1.0"/><rect x="132.2" y="452" width="5.4" height="1.0"/><rect x="138.1" y="452" width="2.5" height="1.0"/><rect x="141.3" y="452" width="6.7" height="1.0"/></g><g fill="#000" fill-opacity="0.8"><rect x="120.0" y="455" width="6.9" height="1.6"/><rect x="127.4" y="455" width="5.1" height="1.6"/><rect x="133.4" y="455" width="3.0" height="1.6"/><rect x="137.0" y="455" width="7.8" height="1.6"/><rect x="145.7" y="455" width="7.1" height="1.6"/><rect x="153.5" y="455" width="2.4" height="1.6"/><rect x="156.8" y="455" width="3.8" height="1.6"/><rect x="161.5" y="455" width="2.5" height="1.6"/><rect x="164.5" y="455" width="3.6" height="1.6"/><rect x="168.6" y="455" width="7.4" height="1.6"/><rect x="176.5" y="455" width="2.2" height="1.6"/><rect x="179.6" y="455" width="2.9" height="1.6"/><rect x="183.3" y="455" width="6.9" height="1.6"/><rect x="190.9" y="455" width="1.1" height="1.6"/></g><g fill="#1e1e1e" fill-opacity="0.68"><rect x="120.0" y="458" width="4.9" height="1.0"/><rect x="125.8" y="458" width="4.0" height="1.0"/><rect x="130.6" y="458" width="4.4" height="1.0"/><rect x="135.6" y="458" width="6.8" height="1.0"/><rect x="143.2" y="458" width="6.0" height="1.0"/><rect x="149.9" y="458" width="4.9" height="1.0"/><rect x="155.7" y="458" width="2.4" height="1.0"/><rect x="159.1" y="458" width="7.5" height="1.0"/><rect x="167.3" y="458" width="6.5" height="1.0"/><rect x="174.7" y="458" width="4.1" height="1.0"/></g><g fill="#000" fill-opacity="0.8"><rect x="120.0" y="461" width="6.8" height="1.6"/><rect x="127.3" y="461" width="7.3" height="1.6"/><rect x="135.6" y="461" width="5.8" height="1.6"/><rect x="142.3" y="461" width="4.2" height="1.6"/><rect x="147.0" y="461" width="6.8" height="1.6"/><rect x="154.5" y="461" width="7.5" height="1.6"/><rect x="162.5" y="461" width="3.5" height="1.6"/><rect x="166.5" y="461" width="7.9" height="1.6"/><rect x="175.2" y="461" width="6.1" height="1.6"/><rect x="182.0" y="461" width="3.2" height="1.6"/><rect x="185.9" y="461" width="5.2" height="1.6"/></g><g fill="#1e1e1e" fill-opacity="0.68"><rect x="120.0" y="464" width="7.8" height="1.0"/><rect x="128.3" y="464" width="4.8" height="1.0"/><rect x="134.0" y="464" width="2.7" height="1.0"/><rect x="137.6" y="464" width="2.9" height="1.0"/><rect x="141.1" y="464" width="7.5" height="1.0"/><rect x="149.2" y="464" width="2.1" height="1.0"/><rect x="152.0" y="464" width="7.5" height="1.0"/><rect x="160.0" y="464" width="3.9" height="1.0"/><rect x="164.4" y="464" width="3.1" height="1.0"/><rect x="168.0" y="464" width="5.5" height="1.0"/><rect x="174.4" y="464" width="6.3" height="1.0"/><rect x="181.6" y="464" width="5.1" height="1.0"/><rect x="187.4" y="464" width="3.1" height="1.0"/><rect x="191.2" y="464" width="0.8" height="1.0"/></g><g fill="#1e1e1e" fill-opacity="0.68"><rect x="120.0" y="467" width="5.8" height="1.0"/><rect x="126.7" y="467" width="4.9" height="1.0"/><rect x="132.2" y="467" width="4.9" height="1.0"/><rect x="137.8" y="467" width="7.5" height="1.0"/><rect x="146.0" y="467" width="2.0" height="1.0"/></g><rect x="120" y="469" width="72" height="1" fill="#050505"/><rect x="151" y="470" width="9" height="1" fill="#333"/><rect x="155" y="472" width="2" height="1" fill="#444"/><rect x="116.3" y="508.40000000000003" width="84.3" height="117.5" fill="#bdbdbd"/><rect x="115.5" y="507.3" width="84.6" height="117.8" fill="#dedede"/><rect x="115.8" y="507.6" width="84" height="117.2" fill="#fff"/><g fill="#1e1e1e" fill-opacity="0.68"><rect x="154.0" y="512" width="4.9" height="1"/><rect x="159.4" y="512" width="4.4" height="1"/></g><rect x="123" y="516" width="72" height="1" fill="#050505"/><g fill="#1e1e1e" fill-opacity="0.68"><rect x="123.0" y="518" width="7.7" height="1.0"/><rect x="131.4" y="518" width="7.9" height="1.0"/><rect x="140.1" y="518" width="6.6" height="1.0"/><rect x="147.3" y="518" width="5.9" height="1.0"/><rect x="153.7" y="518" width="7.3" height="1.0"/></g><g fill="#1e1e1e" fill-opacity="0.68"><rect x="123.0" y="521" width="7.4" height="1.0"/><rect x="131.1" y="521" width="6.8" height="1.0"/><rect x="138.8" y="521" width="4.5" height="1.0"/><rect x="143.8" y="521" width="4.5" height="1.0"/><rect x="149.0" y="521" width="2.9" height="1.0"/><rect x="152.8" y="521" width="2.8" height="1.0"/><rect x="156.5" y="521" width="8.0" height="1.0"/><rect x="165.1" y="521" width="5.1" height="1.0"/><rect x="170.7" y="521" width="2.9" height="1.0"/><rect x="174.1" y="521" width="2.0" height="1.0"/><rect x="176.7" y="521" width="6.9" height="1.0"/><rect x="184.1" y="521" width="4.1" height="1.0"/><rect x="189.1" y="521" width="5.9" height="1.0"/></g><g fill="#1e1e1e" fill-opacity="0.68"><rect x="123.0" y="523" width="7.3" height="1.0"/><rect x="131.2" y="523" width="4.8" height="1.0"/><rect x="136.9" y="523" width="5.5" height="1.0"/><rect x="143.4" y="523" width="3.8" height="1.0"/><rect x="147.7" y="523" width="4.3" height="1.0"/></g><rect x="123" y="525" width="72" height="3.8" fill="#cacaca"/><g fill="#111" fill-opacity="0.75"><rect x="126.0" y="526" width="2.5" height="1.0"/><rect x="129.2" y="526" width="3.3" height="1.0"/><rect x="133.4" y="526" width="3.6" height="1.0"/></g><g fill="#1e1e1e" fill-opacity="0.68"><rect x="123.0" y="530" width="2.9" height="1.0"/><rect x="126.6" y="530" width="3.9" height="1.0"/><rect x="131.2" y="530" width="2.5" height="1.0"/><rect x="134.4" y="530" width="8.0" height="1.0"/><rect x="143.3" y="530" width="6.3" height="1.0"/><rect x="150.3" y="530" width="2.4" height="1.0"/><rect x="153.2" y="530" width="2.6" height="1.0"/><rect x="156.6" y="530" width="6.1" height="1.0"/><rect x="163.5" y="530" width="7.8" height="1.0"/><rect x="171.8" y="530" width="5.9" height="1.0"/><rect x="178.2" y="530" width="7.2" height="1.0"/><rect x="186.3" y="530" width="6.3" height="1.0"/><rect x="193.1" y="530" width="1.9" height="1.0"/></g><g fill="#000" fill-opacity="0.8"><rect x="123.0" y="532" width="4.7" height="1.6"/><rect x="128.2" y="532" width="7.1" height="1.6"/><rect x="136.3" y="532" width="3.2" height="1.6"/><rect x="140.4" y="532" width="2.9" height="1.6"/><rect x="144.2" y="532" width="4.3" height="1.6"/><rect x="149.4" y="532" width="6.5" height="1.6"/><rect x="156.6" y="532" width="6.5" height="1.6"/><rect x="164.0" y="532" width="6.0" height="1.6"/><rect x="170.7" y="532" width="3.1" height="1.6"/><rect x="174.6" y="532" width="6.4" height="1.6"/><rect x="181.6" y="532" width="3.9" height="1.6"/><rect x="186.2" y="532" width="5.4" height="1.6"/><rect x="192.5" y="532" width="2.5" height="1.6"/></g><g fill="#1e1e1e" fill-opacity="0.68"><rect x="123.0" y="536" width="7.0" height="1.0"/><rect x="130.5" y="536" width="2.6" height="1.0"/><rect x="134.0" y="536" width="2.6" height="1.0"/><rect x="137.4" y="536" width="5.8" height="1.0"/><rect x="143.7" y="536" width="3.1" height="1.0"/><rect x="147.5" y="536" width="2.2" height="1.0"/><rect x="150.4" y="536" width="5.6" height="1.0"/><rect x="156.5" y="536" width="2.6" height="1.0"/><rect x="159.6" y="536" width="2.9" height="1.0"/><rect x="163.0" y="536" width="4.6" height="1.0"/><rect x="168.1" y="536" width="4.0" height="1.0"/><rect x="172.9" y="536" width="7.6" height="1.0"/><rect x="180.9" y="536" width="5.9" height="1.0"/><rect x="187.3" y="536" width="6.9" height="1.0"/></g><g fill="#1e1e1e" fill-opacity="0.68"><rect x="123.0" y="538" width="4.9" height="1.0"/><rect x="128.6" y="538" width="5.7" height="1.0"/><rect x="135.2" y="538" width="4.4" height="1.0"/><rect x="140.5" y="538" width="3.9" height="1.0"/><rect x="144.9" y="538" width="6.0" height="1.0"/><rect x="151.8" y="538" width="5.2" height="1.0"/><rect x="157.7" y="538" width="4.0" height="1.0"/><rect x="162.4" y="538" width="3.8" height="1.0"/><rect x="166.9" y="538" width="2.6" height="1.0"/><rect x="170.3" y="538" width="3.2" height="1.0"/><rect x="174.2" y="538" width="6.7" height="1.0"/><rect x="181.4" y="538" width="5.7" height="1.0"/><rect x="187.6" y="538" width="2.4" height="1.0"/></g><g fill="#1e1e1e" fill-opacity="0.68"><rect x="123.0" y="540" width="7.4" height="1.0"/><rect x="131.3" y="540" width="3.4" height="1.0"/><rect x="135.6" y="540" width="5.0" height="1.0"/><rect x="141.1" y="540" width="5.4" height="1.0"/><rect x="147.1" y="540" width="5.9" height="1.0"/></g><g fill="#1e1e1e" fill-opacity="0.68"><rect x="123.0" y="542" width="8.0" height="1.0"/><rect x="131.9" y="542" width="7.0" height="1.0"/><rect x="139.4" y="542" width="5.4" height="1.0"/><rect x="145.3" y="542" width="5.8" height="1.0"/><rect x="151.6" y="542" width="6.7" height="1.0"/><rect x="158.7" y="542" width="1.3" height="1.0"/></g><g fill="#000" fill-opacity="0.8"><rect x="123.0" y="545" width="4.5" height="1.6"/><rect x="128.2" y="545" width="4.0" height="1.6"/><rect x="132.9" y="545" width="3.6" height="1.6"/><rect x="137.0" y="545" width="4.7" height="1.6"/><rect x="142.6" y="545" width="2.8" height="1.6"/><rect x="146.3" y="545" width="5.3" height="1.6"/><rect x="152.5" y="545" width="2.4" height="1.6"/><rect x="155.5" y="545" width="3.0" height="1.6"/><rect x="159.5" y="545" width="8.0" height="1.6"/><rect x="168.1" y="545" width="5.6" height="1.6"/><rect x="174.2" y="545" width="7.6" height="1.6"/><rect x="182.3" y="545" width="3.7" height="1.6"/><rect x="186.8" y="545" width="3.4" height="1.6"/><rect x="191.1" y="545" width="3.9" height="1.6"/></g><g fill="#1e1e1e" fill-opacity="0.68"><rect x="123.0" y="548" width="3.1" height="1.0"/><rect x="127.0" y="548" width="6.9" height="1.0"/><rect x="134.6" y="548" width="2.2" height="1.0"/><rect x="137.3" y="548" width="6.7" height="1.0"/><rect x="144.9" y="548" width="2.8" height="1.0"/><rect x="148.6" y="548" width="7.1" height="1.0"/><rect x="156.4" y="548" width="5.7" height="1.0"/><rect x="163.0" y="548" width="6.8" height="1.0"/><rect x="170.3" y="548" width="3.0" height="1.0"/><rect x="173.9" y="548" width="1.1" height="1.0"/></g><g fill="#1e1e1e" fill-opacity="0.68"><rect x="123.0" y="550" width="5.2" height="1.0"/><rect x="128.7" y="550" width="5.4" height="1.0"/><rect x="134.6" y="550" width="4.0" height="1.0"/><rect x="139.1" y="550" width="3.6" height="1.0"/><rect x="143.6" y="550" width="7.6" height="1.0"/><rect x="151.7" y="550" width="5.9" height="1.0"/><rect x="158.0" y="550" width="6.3" height="1.0"/><rect x="164.9" y="550" width="4.4" height="1.0"/><rect x="170.0" y="550" width="5.6" height="1.0"/><rect x="176.3" y="550" width="4.1" height="1.0"/></g><rect x="123" y="552" width="72" height="4.0" fill="#cacaca"/><g fill="#111" fill-opacity="0.75"><rect x="126.0" y="554" width="7.5" height="1.0"/><rect x="134.4" y="554" width="6.5" height="1.0"/></g><g fill="#1e1e1e" fill-opacity="0.68"><rect x="123.0" y="558" width="4.9" height="1.0"/><rect x="128.6" y="558" width="7.0" height="1.0"/><rect x="136.5" y="558" width="4.5" height="1.0"/><rect x="141.7" y="558" width="2.7" height="1.0"/><rect x="144.9" y="558" width="7.4" height="1.0"/><rect x="153.2" y="558" width="4.0" height="1.0"/><rect x="158.1" y="558" width="4.6" height="1.0"/><rect x="163.2" y="558" width="3.9" height="1.0"/><rect x="167.6" y="558" width="3.8" height="1.0"/><rect x="172.3" y="558" width="1.7" height="1.0"/></g><g fill="#1e1e1e" fill-opacity="0.68"><rect x="123.0" y="560" width="4.3" height="1.0"/><rect x="128.0" y="560" width="6.5" height="1.0"/><rect x="135.2" y="560" width="7.3" height="1.0"/><rect x="143.0" y="560" width="3.5" height="1.0"/><rect x="147.1" y="560" width="3.5" height="1.0"/><rect x="151.3" y="560" width="4.7" height="1.0"/></g><g fill="#1e1e1e" fill-opacity="0.68"><rect x="123.0" y="562" width="6.2" height="1.0"/><rect x="130.1" y="562" width="7.5" height="1.0"/><rect x="138.4" y="562" width="3.8" height="1.0"/><rect x="143.0" y="562" width="7.6" height="1.0"/><rect x="151.1" y="562" width="8.0" height="1.0"/><rect x="160.0" y="562" width="5.0" height="1.0"/></g><g fill="#1e1e1e" fill-opacity="0.68"><rect x="123.0" y="564" width="4.2" height="1.0"/><rect x="128.1" y="564" width="4.5" height="1.0"/><rect x="133.1" y="564" width="3.3" height="1.0"/><rect x="137.4" y="564" width="4.5" height="1.0"/><rect x="142.4" y="564" width="7.4" height="1.0"/><rect x="150.3" y="564" width="5.1" height="1.0"/><rect x="155.9" y="564" width="2.7" height="1.0"/><rect x="159.6" y="564" width="5.5" height="1.0"/><rect x="165.7" y="564" width="2.0" height="1.0"/><rect x="168.2" y="564" width="1.8" height="1.0"/></g><g fill="#1e1e1e" fill-opacity="0.68"><rect x="123.0" y="567" width="3.9" height="1.0"/><rect x="127.4" y="567" width="4.6" height="1.0"/><rect x="132.8" y="567" width="6.9" height="1.0"/><rect x="140.4" y="567" width="2.8" height="1.0"/><rect x="144.1" y="567" width="5.5" height="1.0"/><rect x="150.1" y="567" width="3.8" height="1.0"/><rect x="154.7" y="567" width="7.4" height="1.0"/><rect x="162.8" y="567" width="3.9" height="1.0"/><rect x="167.2" y="567" width="0.8" height="1.0"/></g><rect x="123" y="569" width="72" height="3.8" fill="#cacaca"/><g fill="#111" fill-opacity="0.75"><rect x="126.0" y="570" width="7.3" height="1.0"/><rect x="133.8" y="570" width="3.8" height="1.0"/><rect x="138.4" y="570" width="7.4" height="1.0"/><rect x="146.3" y="570" width="1.7" height="1.0"/></g><g fill="#1e1e1e" fill-opacity="0.68"><rect x="123.0" y="575" width="7.4" height="1.0"/><rect x="130.9" y="575" width="3.0" height="1.0"/><rect x="134.8" y="575" width="8.0" height="1.0"/><rect x="143.3" y="575" width="5.2" height="1.0"/><rect x="149.0" y="575" width="3.1" height="1.0"/><rect x="152.6" y="575" width="2.4" height="1.0"/></g><g fill="#000" fill-opacity="0.8"><rect x="123.0" y="578" width="6.4" height="1.6"/><rect x="130.1" y="578" width="7.8" height="1.6"/><rect x="138.5" y="578" width="7.2" height="1.6"/><rect x="146.6" y="578" width="7.3" height="1.6"/><rect x="154.6" y="578" width="5.4" height="1.6"/></g><g fill="#1e1e1e" fill-opacity="0.68"><rect x="160.0" y="578" width="4.5" height="1.0"/><rect x="165.0" y="578" width="3.3" height="1.0"/><rect x="169.0" y="578" width="2.7" height="1.0"/><rect x="172.7" y="578" width="3.2" height="1.0"/><rect x="176.3" y="578" width="6.3" height="1.0"/><rect x="183.6" y="578" width="6.0" height="1.0"/><rect x="190.2" y="578" width="4.2" height="1.0"/></g><g fill="#1e1e1e" fill-opacity="0.68"><rect x="123.0" y="582" width="5.1" height="1.0"/><rect x="128.6" y="582" width="5.5" height="1.0"/><rect x="134.7" y="582" width="7.9" height="1.0"/><rect x="143.0" y="582" width="6.0" height="1.0"/><rect x="149.8" y="582" width="2.8" height="1.0"/><rect x="153.4" y="582" width="2.5" height="1.0"/><rect x="156.5" y="582" width="4.6" height="1.0"/><rect x="162.0" y="582" width="2.4" height="1.0"/><rect x="165.0" y="582" width="2.0" height="1.0"/><rect x="167.9" y="582" width="3.7" height="1.0"/><rect x="172.3" y="582" width="4.5" height="1.0"/><rect x="177.8" y="582" width="2.5" height="1.0"/><rect x="181.0" y="582" width="7.9" height="1.0"/><rect x="189.4" y="582" width="3.5" height="1.0"/><rect x="193.6" y="582" width="1.4" height="1.0"/></g><g fill="#1e1e1e" fill-opacity="0.68"><rect x="123.0" y="584" width="3.1" height="1.0"/><rect x="126.6" y="584" width="7.9" height="1.0"/><rect x="135.0" y="584" width="5.7" height="1.0"/><rect x="141.7" y="584" width="4.3" height="1.0"/><rect x="146.7" y="584" width="2.3" height="1.0"/></g><g fill="#000" fill-opacity="0.8"><rect x="123.0" y="587" width="5.3" height="1.6"/><rect x="129.2" y="587" width="7.5" height="1.6"/><rect x="137.4" y="587" width="5.9" height="1.6"/><rect x="143.8" y="587" width="5.1" height="1.6"/><rect x="149.8" y="587" width="7.0" height="1.6"/><rect x="157.7" y="587" width="6.1" height="1.6"/><rect x="164.7" y="587" width="6.5" height="1.6"/><rect x="172.1" y="587" width="3.0" height="1.6"/><rect x="175.6" y="587" width="2.7" height="1.6"/><rect x="179.0" y="587" width="3.4" height="1.6"/><rect x="183.1" y="587" width="5.3" height="1.6"/><rect x="189.1" y="587" width="5.9" height="1.6"/></g><g fill="#1e1e1e" fill-opacity="0.68"><rect x="123.0" y="591" width="3.4" height="1.0"/><rect x="127.1" y="591" width="5.3" height="1.0"/><rect x="133.3" y="591" width="5.6" height="1.0"/><rect x="139.6" y="591" width="2.2" height="1.0"/><rect x="142.7" y="591" width="7.8" height="1.0"/><rect x="151.0" y="591" width="5.4" height="1.0"/><rect x="157.0" y="591" width="4.0" height="1.0"/><rect x="161.8" y="591" width="2.1" height="1.0"/><rect x="164.6" y="591" width="6.8" height="1.0"/><rect x="172.4" y="591" width="4.7" height="1.0"/><rect x="177.7" y="591" width="7.1" height="1.0"/><rect x="185.4" y="591" width="2.4" height="1.0"/><rect x="188.3" y="591" width="5.4" height="1.0"/></g><g fill="#1e1e1e" fill-opacity="0.68"><rect x="123.0" y="593" width="5.5" height="1.0"/><rect x="129.4" y="593" width="3.4" height="1.0"/><rect x="133.3" y="593" width="2.3" height="1.0"/><rect x="136.3" y="593" width="2.3" height="1.0"/><rect x="139.3" y="593" width="6.9" height="1.0"/><rect x="147.1" y="593" width="5.2" height="1.0"/><rect x="153.0" y="593" width="6.6" height="1.0"/></g><g fill="#1e1e1e" fill-opacity="0.68"><rect x="123.0" y="596" width="2.5" height="1.0"/><rect x="126.4" y="596" width="3.0" height="1.0"/><rect x="130.2" y="596" width="3.5" height="1.0"/><rect x="134.3" y="596" width="6.1" height="1.0"/><rect x="141.4" y="596" width="6.7" height="1.0"/><rect x="148.6" y="596" width="3.9" height="1.0"/><rect x="153.2" y="596" width="4.2" height="1.0"/><rect x="157.9" y="596" width="6.2" height="1.0"/><rect x="164.6" y="596" width="2.8" height="1.0"/><rect x="168.3" y="596" width="7.9" height="1.0"/><rect x="176.7" y="596" width="6.5" height="1.0"/><rect x="184.1" y="596" width="6.5" height="1.0"/><rect x="191.0" y="596" width="2.0" height="1.0"/><rect x="193.8" y="596" width="1.2" height="1.0"/></g><rect x="123" y="598" width="72" height="3.6" fill="#cacaca"/><g fill="#111" fill-opacity="0.75"><rect x="126.0" y="599" width="2.5" height="1.0"/><rect x="129.4" y="599" width="3.8" height="1.0"/><rect x="133.9" y="599" width="7.6" height="1.0"/><rect x="142.1" y="599" width="5.9" height="1.0"/></g><g fill="#1e1e1e" fill-opacity="0.68"><rect x="123.0" y="603" width="6.6" height="1.0"/><rect x="130.5" y="603" width="5.7" height="1.0"/><rect x="136.9" y="603" width="3.5" height="1.0"/><rect x="141.3" y="603" width="7.1" height="1.0"/><rect x="149.1" y="603" width="4.8" height="1.0"/><rect x="154.4" y="603" width="4.2" height="1.0"/><rect x="159.3" y="603" width="7.7" height="1.0"/><rect x="167.8" y="603" width="3.3" height="1.0"/><rect x="171.6" y="603" width="4.4" height="1.0"/><rect x="177.0" y="603" width="8.0" height="1.0"/></g><g fill="#1e1e1e" fill-opacity="0.68"><rect x="123.0" y="606" width="4.1" height="1.0"/><rect x="128.0" y="606" width="7.5" height="1.0"/><rect x="136.3" y="606" width="5.7" height="1.0"/></g><g fill="#1e1e1e" fill-opacity="0.68"><rect x="123.0" y="609" width="4.8" height="1.0"/><rect x="128.5" y="609" width="7.6" height="1.0"/><rect x="136.6" y="609" width="4.3" height="1.0"/><rect x="141.4" y="609" width="3.3" height="1.0"/><rect x="145.4" y="609" width="3.5" height="1.0"/><rect x="149.7" y="609" width="6.8" height="1.0"/><rect x="157.3" y="609" width="3.2" height="1.0"/><rect x="161.0" y="609" width="5.6" height="1.0"/><rect x="167.3" y="609" width="4.8" height="1.0"/><rect x="172.8" y="609" width="8.0" height="1.0"/><rect x="181.7" y="609" width="3.1" height="1.0"/><rect x="185.4" y="609" width="3.2" height="1.0"/><rect x="189.4" y="609" width="4.5" height="1.0"/><rect x="194.4" y="609" width="0.6" height="1.0"/></g><g fill="#1e1e1e" fill-opacity="0.68"><rect x="123.0" y="611" width="7.7" height="1.0"/><rect x="131.6" y="611" width="2.1" height="1.0"/><rect x="134.2" y="611" width="2.8" height="1.0"/></g><g fill="#1e1e1e" fill-opacity="0.68"><rect x="123.0" y="614" width="4.4" height="1.0"/><rect x="128.3" y="614" width="6.3" height="1.0"/><rect x="135.2" y="614" width="2.6" height="1.0"/><rect x="138.4" y="614" width="2.9" height="1.0"/><rect x="142.0" y="614" width="2.8" height="1.0"/><rect x="145.3" y="614" width="6.3" height="1.0"/><rect x="152.2" y="614" width="2.1" height="1.0"/></g><g fill="#1e1e1e" fill-opacity="0.68"><rect x="123.0" y="617" width="7.0" height="1.0"/><rect x="130.7" y="617" width="2.5" height="1.0"/><rect x="133.9" y="617" width="4.0" height="1.0"/><rect x="138.8" y="617" width="6.0" height="1.0"/><rect x="145.5" y="617" width="4.4" height="1.0"/><rect x="150.4" y="617" width="4.9" height="1.0"/><rect x="155.8" y="617" width="2.9" height="1.0"/><rect x="159.6" y="617" width="2.8" height="1.0"/><rect x="162.9" y="617" width="1.1" height="1.0"/></g><rect x="123" y="619" width="72" height="1" fill="#050505"/><rect x="154" y="620" width="9" height="1" fill="#333"/><rect x="158" y="622" width="2" height="1" fill="#444"/><rect x="116.4" y="658.4" width="83.39999999999999" height="117.3" fill="#bdbdbd"/><rect x="115.60000000000001" y="657.3000000000001" width="83.69999999999999" height="117.6" fill="#dedede"/><rect x="115.9" y="657.6" width="83.1" height="117" fill="#fff"/><g fill="#1e1e1e" fill-opacity="0.68"><rect x="151.0" y="662" width="4.9" height="1"/><rect x="156.8" y="662" width="2.8" height="1"/><rect x="160.5" y="662" width="1.0" height="1"/></g><rect x="123.5" y="666" width="68.5" height="1" fill="#050505"/><g fill="#1e1e1e" fill-opacity="0.68"><rect x="120.0" y="668" width="6.4" height="1.0"/><rect x="127.3" y="668" width="4.3" height="1.0"/><rect x="132.0" y="668" width="7.0" height="1.0"/><rect x="139.9" y="668" width="6.3" height="1.0"/><rect x="146.9" y="668" width="2.8" height="1.0"/><rect x="150.6" y="668" width="7.2" height="1.0"/><rect x="158.3" y="668" width="1.7" height="1.0"/></g><g fill="#1e1e1e" fill-opacity="0.68"><rect x="120.0" y="670" width="4.1" height="1.0"/><rect x="124.6" y="670" width="2.8" height="1.0"/><rect x="127.9" y="670" width="6.5" height="1.0"/><rect x="135.1" y="670" width="5.4" height="1.0"/><rect x="141.4" y="670" width="3.8" height="1.0"/><rect x="146.1" y="670" width="2.4" height="1.0"/><rect x="149.0" y="670" width="5.3" height="1.0"/><rect x="155.0" y="670" width="6.0" height="1.0"/><rect x="161.7" y="670" width="3.4" height="1.0"/><rect x="166.0" y="670" width="3.6" height="1.0"/><rect x="170.3" y="670" width="2.7" height="1.0"/><rect x="173.7" y="670" width="2.4" height="1.0"/><rect x="176.8" y="670" width="7.6" height="1.0"/><rect x="185.1" y="670" width="5.0" height="1.0"/><rect x="190.7" y="670" width="1.3" height="1.0"/></g><g fill="#1e1e1e" fill-opacity="0.68"><rect x="120.0" y="672" width="3.2" height="1.0"/><rect x="123.7" y="672" width="4.1" height="1.0"/><rect x="128.7" y="672" width="3.4" height="1.0"/><rect x="132.7" y="672" width="6.5" height="1.0"/></g><rect x="120" y="675.5" width="72" height="3.5" fill="#cacaca"/><g fill="#111" fill-opacity="0.75"><rect x="123.0" y="677" width="6.8" height="1.0"/><rect x="130.5" y="677" width="5.5" height="1.0"/><rect x="136.9" y="677" width="3.1" height="1.0"/></g><g fill="#1e1e1e" fill-opacity="0.68"><rect x="120.0" y="681" width="6.2" height="1.0"/><rect x="126.7" y="681" width="7.4" height="1.0"/><rect x="134.6" y="681" width="4.2" height="1.0"/><rect x="139.3" y="681" width="7.5" height="1.0"/><rect x="147.5" y="681" width="2.3" height="1.0"/><rect x="150.5" y="681" width="7.1" height="1.0"/><rect x="158.3" y="681" width="4.8" height="1.0"/><rect x="163.8" y="681" width="7.3" height="1.0"/><rect x="171.6" y="681" width="2.1" height="1.0"/><rect x="174.5" y="681" width="3.9" height="1.0"/><rect x="179.1" y="681" width="5.4" height="1.0"/><rect x="185.2" y="681" width="6.8" height="1.0"/></g><g fill="#1e1e1e" fill-opacity="0.68"><rect x="120.0" y="683" width="5.9" height="1.0"/><rect x="126.6" y="683" width="5.7" height="1.0"/><rect x="132.9" y="683" width="2.2" height="1.0"/><rect x="136.0" y="683" width="7.7" height="1.0"/><rect x="144.2" y="683" width="5.8" height="1.0"/><rect x="150.8" y="683" width="5.3" height="1.0"/><rect x="157.0" y="683" width="4.5" height="1.0"/><rect x="162.2" y="683" width="2.4" height="1.0"/></g><rect x="116.5" y="211.2" width="82" height="78" fill="none" stroke="#262626" stroke-width="2"/>
<rect x="195.5" y="286.2" width="5.2" height="5.3" fill="#2b2b2b"/>
</svg>
<span class="a" style="left:151px;top:183px;font-size:12px;line-height:14px;color:#333">15</span>
<span class="a" style="left:151px;top:333px;font-size:12px;line-height:14px;color:#333">16</span>
<span class="a" style="left:151px;top:483px;font-size:12px;line-height:14px;color:#333">17</span>
<span class="a" style="left:151px;top:633px;font-size:12px;line-height:14px;color:#333">18</span>
<span class="a" style="left:49px;top:77px;font-size:12px;line-height:14px;font-weight:bold;letter-spacing:-0.4px;color:#161626">Page Thumbnails</span>
<div id="doc" class="a"></div>
<div id="page" class="a"></div>
<div class="a" style="left:289px;top:64px;width:6px;height:621px;background:#4d4d4d"></div>
<svg class="a" style="left:289px;top:100px" width="8" height="14" viewBox="289 100 8 14"><path d="M290.2 104 L294.2 106.8 L290.2 109.6" fill="none" stroke="#8a8a8a" stroke-width="0.9"/></svg>
<svg class="a" style="left:289px;top:360px" width="8" height="55" viewBox="289 360 8 55"><rect x="291" y="363" width="1" height="1" fill="#d8d8d8"/><rect x="293" y="363" width="1" height="1" fill="#d8d8d8"/><rect x="291" y="365" width="1" height="1" fill="#d8d8d8"/><rect x="293" y="365" width="1" height="1" fill="#d8d8d8"/><rect x="291" y="367" width="1" height="1" fill="#d8d8d8"/><rect x="293" y="367" width="1" height="1" fill="#d8d8d8"/><rect x="291" y="369" width="1" height="1" fill="#d8d8d8"/><rect x="293" y="369" width="1" height="1" fill="#d8d8d8"/><rect x="291" y="371" width="1" height="1" fill="#d8d8d8"/><rect x="293" y="371" width="1" height="1" fill="#d8d8d8"/><rect x="291" y="373" width="1" height="1" fill="#d8d8d8"/><rect x="293" y="373" width="1" height="1" fill="#d8d8d8"/><rect x="291" y="375" width="1" height="1" fill="#d8d8d8"/><rect x="293" y="375" width="1" height="1" fill="#d8d8d8"/><rect x="291" y="377" width="1" height="1" fill="#d8d8d8"/><rect x="293" y="377" width="1" height="1" fill="#d8d8d8"/><rect x="291" y="379" width="1" height="1" fill="#d8d8d8"/><rect x="293" y="379" width="1" height="1" fill="#d8d8d8"/><rect x="291" y="381" width="1" height="1" fill="#d8d8d8"/><rect x="293" y="381" width="1" height="1" fill="#d8d8d8"/><rect x="291" y="383" width="1" height="1" fill="#d8d8d8"/><rect x="293" y="383" width="1" height="1" fill="#d8d8d8"/><rect x="291" y="385" width="1" height="1" fill="#d8d8d8"/><rect x="293" y="385" width="1" height="1" fill="#d8d8d8"/><rect x="291" y="387" width="1" height="1" fill="#d8d8d8"/><rect x="293" y="387" width="1" height="1" fill="#d8d8d8"/><rect x="291" y="389" width="1" height="1" fill="#d8d8d8"/><rect x="293" y="389" width="1" height="1" fill="#d8d8d8"/><rect x="291" y="391" width="1" height="1" fill="#d8d8d8"/><rect x="293" y="391" width="1" height="1" fill="#d8d8d8"/><rect x="291" y="393" width="1" height="1" fill="#d8d8d8"/><rect x="293" y="393" width="1" height="1" fill="#d8d8d8"/><rect x="291" y="395" width="1" height="1" fill="#d8d8d8"/><rect x="293" y="395" width="1" height="1" fill="#d8d8d8"/><rect x="291" y="397" width="1" height="1" fill="#d8d8d8"/><rect x="293" y="397" width="1" height="1" fill="#d8d8d8"/><rect x="291" y="399" width="1" height="1" fill="#d8d8d8"/><rect x="293" y="399" width="1" height="1" fill="#d8d8d8"/><rect x="291" y="401" width="1" height="1" fill="#d8d8d8"/><rect x="293" y="401" width="1" height="1" fill="#d8d8d8"/><rect x="291" y="403" width="1" height="1" fill="#d8d8d8"/><rect x="293" y="403" width="1" height="1" fill="#d8d8d8"/><rect x="291" y="405" width="1" height="1" fill="#d8d8d8"/><rect x="293" y="405" width="1" height="1" fill="#d8d8d8"/><rect x="291" y="407" width="1" height="1" fill="#d8d8d8"/><rect x="293" y="407" width="1" height="1" fill="#d8d8d8"/><rect x="291" y="409" width="1" height="1" fill="#d8d8d8"/><rect x="293" y="409" width="1" height="1" fill="#d8d8d8"/></svg>
<div class="a" style="left:481px;top:64px;width:629px;height:5px;background:linear-gradient(#e2e2e2,rgba(255,255,255,0))"></div>
<svg class="a" style="left:481px;top:64px" width="629" height="621" viewBox="481 64 629 621">
<rect x="539" y="108.8" width="571" height="1.4" fill="#000"/>
<rect x="539" y="138" width="571" height="24" fill="#cdcdcd"/>
<rect x="541.70" y="141.70" width="19.5" height="17.5" fill="#fff"/><path d="M550.90 143.20 Q551.80 141.90 552.70 143.20 L560.40 157.20 H543.40 Z" fill="#000"/><rect x="544.00" y="157.00" width="16.3" height="2" fill="#000"/><path d="M550.70 145.30 Q551.80 144.60 552.90 145.30 L552.30 152.80 H551.30 Z" fill="#fff"/><rect x="551.10" y="154.00" width="1.5" height="1.7" fill="#fff"/><rect x="710.50" y="141.70" width="19.5" height="17.5" fill="#fff"/><path d="M719.70 143.20 Q720.60 141.90 721.50 143.20 L729.20 157.20 H712.20 Z" fill="#000"/><rect x="712.80" y="157.00" width="16.3" height="2" fill="#000"/><path d="M719.50 145.30 Q720.60 144.60 721.70 145.30 L721.10 152.80 H720.10 Z" fill="#fff"/><rect x="719.90" y="154.00" width="1.5" height="1.7" fill="#fff"/>
<rect x="539" y="235" width="571" height="23.5" fill="#cdcdcd"/>
<rect x="541.70" y="238.70" width="19.5" height="17.5" fill="#fff"/><path d="M550.90 240.20 Q551.80 238.90 552.70 240.20 L560.40 254.20 H543.40 Z" fill="#000"/><rect x="544.00" y="254.00" width="16.3" height="2" fill="#000"/><path d="M550.70 242.30 Q551.80 241.60 552.90 242.30 L552.30 249.80 H551.30 Z" fill="#fff"/><rect x="551.10" y="251.00" width="1.5" height="1.7" fill="#fff"/><rect x="762.00" y="238.70" width="19.5" height="17.5" fill="#fff"/><path d="M771.20 240.20 Q772.10 238.90 773.00 240.20 L780.70 254.20 H763.70 Z" fill="#000"/><rect x="764.30" y="254.00" width="16.3" height="2" fill="#000"/><path d="M771.00 242.30 Q772.10 241.60 773.20 242.30 L772.60 249.80 H771.60 Z" fill="#fff"/><rect x="771.40" y="251.00" width="1.5" height="1.7" fill="#fff"/>
<rect x="699.2" y="315.2" width="1.4" height="170" fill="#111"/>
<rect x="963.8" y="315.2" width="1.4" height="170" fill="#111"/>
<rect x="699.2" y="315" width="266" height="1.8" fill="#111"/>
<rect x="699.2" y="500" width="1.4" height="170" fill="#111"/>
<rect x="963.8" y="500" width="1.4" height="170" fill="#111"/>
<rect x="699.2" y="500" width="266" height="1.8" fill="#111"/>
</svg>
<svg class="a" style="left:699px;top:315px" width="267" height="170" viewBox="699 315 267 170">
<defs></defs>
<g fill="none" stroke="#2a2a2a" stroke-width="0.85" stroke-linecap="round" stroke-linejoin="round">
<!-- tire -->
<path d="M757.6 486 C760 465 766 450 776 443 C786 437 812 436 826 440 C842 448 852 465 855 486"/>
<path d="M762 482 Q765 468 776 470 Q782 474 780 486"/>
<clipPath id="tc1"><ellipse cx="806" cy="494" rx="47" ry="53"/></clipPath><g clip-path="url(#tc1)" fill="#fff" stroke="#222" stroke-width="0.9"><rect x="747.6" y="359.9" width="11" height="8.5" rx="2" transform="rotate(26 753.1 364.2)"/><rect x="741.6" y="372.0" width="11" height="8.5" rx="2" transform="rotate(26 747.1 376.3)"/><rect x="735.7" y="384.2" width="11" height="8.5" rx="2" transform="rotate(26 741.2 388.4)"/><rect x="729.8" y="396.3" width="11" height="8.5" rx="2" transform="rotate(26 735.3 400.6)"/><rect x="723.9" y="408.4" width="11" height="8.5" rx="2" transform="rotate(26 729.4 412.7)"/><rect x="718.0" y="420.6" width="11" height="8.5" rx="2" transform="rotate(26 723.5 424.8)"/><rect x="712.1" y="432.7" width="11" height="8.5" rx="2" transform="rotate(26 717.6 437.0)"/><rect x="706.1" y="444.8" width="11" height="8.5" rx="2" transform="rotate(26 711.6 449.1)"/><rect x="700.2" y="457.0" width="11" height="8.5" rx="2" transform="rotate(26 705.7 461.2)"/><rect x="694.3" y="469.1" width="11" height="8.5" rx="2" transform="rotate(26 699.8 473.4)"/><rect x="688.4" y="481.2" width="11" height="8.5" rx="2" transform="rotate(26 693.9 485.5)"/><rect x="682.5" y="493.4" width="11" height="8.5" rx="2" transform="rotate(26 688.0 497.6)"/><rect x="676.5" y="505.5" width="11" height="8.5" rx="2" transform="rotate(26 682.0 509.8)"/><rect x="670.6" y="517.6" width="11" height="8.5" rx="2" transform="rotate(26 676.1 521.9)"/><rect x="664.7" y="529.8" width="11" height="8.5" rx="2" transform="rotate(26 670.2 534.0)"/><rect x="761.5" y="366.7" width="11" height="8.5" rx="2" transform="rotate(26 767.0 370.9)"/><rect x="755.6" y="378.8" width="11" height="8.5" rx="2" transform="rotate(26 761.1 383.1)"/><rect x="749.7" y="391.0" width="11" height="8.5" rx="2" transform="rotate(26 755.2 395.2)"/><rect x="743.7" y="403.1" width="11" height="8.5" rx="2" transform="rotate(26 749.2 407.3)"/><rect x="737.8" y="415.2" width="11" height="8.5" rx="2" transform="rotate(26 743.3 419.5)"/><rect x="731.9" y="427.4" width="11" height="8.5" rx="2" transform="rotate(26 737.4 431.6)"/><rect x="726.0" y="439.5" width="11" height="8.5" rx="2" transform="rotate(26 731.5 443.8)"/><rect x="720.1" y="451.6" width="11" height="8.5" rx="2" transform="rotate(26 725.6 455.9)"/><rect x="714.2" y="463.8" width="11" height="8.5" rx="2" transform="rotate(26 719.7 468.0)"/><rect x="708.2" y="475.9" width="11" height="8.5" rx="2" transform="rotate(26 713.7 480.2)"/><rect x="702.3" y="488.0" width="11" height="8.5" rx="2" transform="rotate(26 707.8 492.3)"/><rect x="696.4" y="500.2" width="11" height="8.5" rx="2" transform="rotate(26 701.9 504.4)"/><rect x="690.5" y="512.3" width="11" height="8.5" rx="2" transform="rotate(26 696.0 516.6)"/><rect x="684.6" y="524.4" width="11" height="8.5" rx="2" transform="rotate(26 690.1 528.7)"/><rect x="678.6" y="536.6" width="11" height="8.5" rx="2" transform="rotate(26 684.1 540.8)"/><rect x="775.4" y="373.5" width="11" height="8.5" rx="2" transform="rotate(26 780.9 377.7)"/><rect x="769.5" y="385.6" width="11" height="8.5" rx="2" transform="rotate(26 775.0 389.9)"/><rect x="763.6" y="397.8" width="11" height="8.5" rx="2" transform="rotate(26 769.1 402.0)"/><rect x="757.7" y="409.9" width="11" height="8.5" rx="2" transform="rotate(26 763.2 414.1)"/><rect x="751.8" y="422.0" width="11" height="8.5" rx="2" transform="rotate(26 757.3 426.3)"/><rect x="745.8" y="434.2" width="11" height="8.5" rx="2" transform="rotate(26 751.3 438.4)"/><rect x="739.9" y="446.3" width="11" height="8.5" rx="2" transform="rotate(26 745.4 450.5)"/><rect x="734.0" y="458.4" width="11" height="8.5" rx="2" transform="rotate(26 739.5 462.7)"/><rect x="728.1" y="470.6" width="11" height="8.5" rx="2" transform="rotate(26 733.6 474.8)"/><rect x="722.2" y="482.7" width="11" height="8.5" rx="2" transform="rotate(26 727.7 486.9)"/><rect x="716.2" y="494.8" width="11" height="8.5" rx="2" transform="rotate(26 721.7 499.1)"/><rect x="710.3" y="507.0" width="11" height="8.5" rx="2" transform="rotate(26 715.8 511.2)"/><rect x="704.4" y="519.1" width="11" height="8.5" rx="2" transform="rotate(26 709.9 523.3)"/><rect x="698.5" y="531.2" width="11" height="8.5" rx="2" transform="rotate(26 704.0 535.5)"/><rect x="692.6" y="543.4" width="11" height="8.5" rx="2" transform="rotate(26 698.1 547.6)"/><rect x="789.4" y="380.3" width="11" height="8.5" rx="2" transform="rotate(26 794.9 384.5)"/><rect x="783.4" y="392.4" width="11" height="8.5" rx="2" transform="rotate(26 788.9 396.7)"/><rect x="777.5" y="404.6" width="11" height="8.5" rx="2" transform="rotate(26 783.0 408.8)"/><rect x="771.6" y="416.7" width="11" height="8.5" rx="2" transform="rotate(26 777.1 420.9)"/><rect x="765.7" y="428.8" width="11" height="8.5" rx="2" transform="rotate(26 771.2 433.1)"/><rect x="759.8" y="441.0" width="11" height="8.5" rx="2" transform="rotate(26 765.3 445.2)"/><rect x="753.8" y="453.1" width="11" height="8.5" rx="2" transform="rotate(26 759.3 457.3)"/><rect x="747.9" y="465.2" width="11" height="8.5" rx="2" transform="rotate(26 753.4 469.5)"/><rect x="742.0" y="477.4" width="11" height="8.5" rx="2" transform="rotate(26 747.5 481.6)"/><rect x="736.1" y="489.5" width="11" height="8.5" rx="2" transform="rotate(26 741.6 493.7)"/><rect x="730.2" y="501.6" width="11" height="8.5" rx="2" transform="rotate(26 735.7 505.9)"/><rect x="724.3" y="513.8" width="11" height="8.5" rx="2" transform="rotate(26 729.8 518.0)"/><rect x="718.3" y="525.9" width="11" height="8.5" rx="2" transform="rotate(26 723.8 530.1)"/><rect x="712.4" y="538.0" width="11" height="8.5" rx="2" transform="rotate(26 717.9 542.3)"/><rect x="706.5" y="550.2" width="11" height="8.5" rx="2" transform="rotate(26 712.0 554.4)"/><rect x="803.3" y="387.1" width="11" height="8.5" rx="2" transform="rotate(26 808.8 391.3)"/><rect x="797.4" y="399.2" width="11" height="8.5" rx="2" transform="rotate(26 802.9 403.5)"/><rect x="791.5" y="411.3" width="11" height="8.5" rx="2" transform="rotate(26 797.0 415.6)"/><rect x="785.5" y="423.5" width="11" height="8.5" rx="2" transform="rotate(26 791.0 427.7)"/><rect x="779.6" y="435.6" width="11" height="8.5" rx="2" transform="rotate(26 785.1 439.9)"/><rect x="773.7" y="447.8" width="11" height="8.5" rx="2" transform="rotate(26 779.2 452.0)"/><rect x="767.8" y="459.9" width="11" height="8.5" rx="2" transform="rotate(26 773.3 464.1)"/><rect x="761.9" y="472.0" width="11" height="8.5" rx="2" transform="rotate(26 767.4 476.3)"/><rect x="755.9" y="484.2" width="11" height="8.5" rx="2" transform="rotate(26 761.4 488.4)"/><rect x="750.0" y="496.3" width="11" height="8.5" rx="2" transform="rotate(26 755.5 500.5)"/><rect x="744.1" y="508.4" width="11" height="8.5" rx="2" transform="rotate(26 749.6 512.7)"/><rect x="738.2" y="520.6" width="11" height="8.5" rx="2" transform="rotate(26 743.7 524.8)"/><rect x="732.3" y="532.7" width="11" height="8.5" rx="2" transform="rotate(26 737.8 536.9)"/><rect x="726.4" y="544.8" width="11" height="8.5" rx="2" transform="rotate(26 731.9 549.1)"/><rect x="720.4" y="557.0" width="11" height="8.5" rx="2" transform="rotate(26 725.9 561.2)"/><rect x="817.2" y="393.9" width="11" height="8.5" rx="2" transform="rotate(26 822.7 398.1)"/><rect x="811.3" y="406.0" width="11" height="8.5" rx="2" transform="rotate(26 816.8 410.3)"/><rect x="805.4" y="418.1" width="11" height="8.5" rx="2" transform="rotate(26 810.9 422.4)"/><rect x="799.5" y="430.3" width="11" height="8.5" rx="2" transform="rotate(26 805.0 434.5)"/><rect x="793.5" y="442.4" width="11" height="8.5" rx="2" transform="rotate(26 799.0 446.7)"/><rect x="787.6" y="454.5" width="11" height="8.5" rx="2" transform="rotate(26 793.1 458.8)"/><rect x="781.7" y="466.7" width="11" height="8.5" rx="2" transform="rotate(26 787.2 470.9)"/><rect x="775.8" y="478.8" width="11" height="8.5" rx="2" transform="rotate(26 781.3 483.1)"/><rect x="769.9" y="490.9" width="11" height="8.5" rx="2" transform="rotate(26 775.4 495.2)"/><rect x="764.0" y="503.1" width="11" height="8.5" rx="2" transform="rotate(26 769.5 507.3)"/><rect x="758.0" y="515.2" width="11" height="8.5" rx="2" transform="rotate(26 763.5 519.5)"/><rect x="752.1" y="527.3" width="11" height="8.5" rx="2" transform="rotate(26 757.6 531.6)"/><rect x="746.2" y="539.5" width="11" height="8.5" rx="2" transform="rotate(26 751.7 543.7)"/><rect x="740.3" y="551.6" width="11" height="8.5" rx="2" transform="rotate(26 745.8 555.9)"/><rect x="734.4" y="563.7" width="11" height="8.5" rx="2" transform="rotate(26 739.9 568.0)"/><rect x="831.2" y="400.7" width="11" height="8.5" rx="2" transform="rotate(26 836.7 404.9)"/><rect x="825.2" y="412.8" width="11" height="8.5" rx="2" transform="rotate(26 830.7 417.1)"/><rect x="819.3" y="424.9" width="11" height="8.5" rx="2" transform="rotate(26 824.8 429.2)"/><rect x="813.4" y="437.1" width="11" height="8.5" rx="2" transform="rotate(26 818.9 441.3)"/><rect x="807.5" y="449.2" width="11" height="8.5" rx="2" transform="rotate(26 813.0 453.5)"/><rect x="801.6" y="461.3" width="11" height="8.5" rx="2" transform="rotate(26 807.1 465.6)"/><rect x="795.6" y="473.5" width="11" height="8.5" rx="2" transform="rotate(26 801.1 477.7)"/><rect x="789.7" y="485.6" width="11" height="8.5" rx="2" transform="rotate(26 795.2 489.9)"/><rect x="783.8" y="497.7" width="11" height="8.5" rx="2" transform="rotate(26 789.3 502.0)"/><rect x="777.9" y="509.9" width="11" height="8.5" rx="2" transform="rotate(26 783.4 514.1)"/><rect x="772.0" y="522.0" width="11" height="8.5" rx="2" transform="rotate(26 777.5 526.3)"/><rect x="766.1" y="534.1" width="11" height="8.5" rx="2" transform="rotate(26 771.6 538.4)"/><rect x="760.1" y="546.3" width="11" height="8.5" rx="2" transform="rotate(26 765.6 550.5)"/><rect x="754.2" y="558.4" width="11" height="8.5" rx="2" transform="rotate(26 759.7 562.7)"/><rect x="748.3" y="570.5" width="11" height="8.5" rx="2" transform="rotate(26 753.8 574.8)"/><rect x="845.1" y="407.5" width="11" height="8.5" rx="2" transform="rotate(26 850.6 411.7)"/><rect x="839.2" y="419.6" width="11" height="8.5" rx="2" transform="rotate(26 844.7 423.8)"/><rect x="833.2" y="431.7" width="11" height="8.5" rx="2" transform="rotate(26 838.7 436.0)"/><rect x="827.3" y="443.9" width="11" height="8.5" rx="2" transform="rotate(26 832.8 448.1)"/><rect x="821.4" y="456.0" width="11" height="8.5" rx="2" transform="rotate(26 826.9 460.3)"/><rect x="815.5" y="468.1" width="11" height="8.5" rx="2" transform="rotate(26 821.0 472.4)"/><rect x="809.6" y="480.3" width="11" height="8.5" rx="2" transform="rotate(26 815.1 484.5)"/><rect x="803.7" y="492.4" width="11" height="8.5" rx="2" transform="rotate(26 809.2 496.7)"/><rect x="797.7" y="504.5" width="11" height="8.5" rx="2" transform="rotate(26 803.2 508.8)"/><rect x="791.8" y="516.7" width="11" height="8.5" rx="2" transform="rotate(26 797.3 520.9)"/><rect x="785.9" y="528.8" width="11" height="8.5" rx="2" transform="rotate(26 791.4 533.1)"/><rect x="780.0" y="540.9" width="11" height="8.5" rx="2" transform="rotate(26 785.5 545.2)"/><rect x="774.1" y="553.1" width="11" height="8.5" rx="2" transform="rotate(26 779.6 557.3)"/><rect x="768.1" y="565.2" width="11" height="8.5" rx="2" transform="rotate(26 773.6 569.5)"/><rect x="762.2" y="577.3" width="11" height="8.5" rx="2" transform="rotate(26 767.7 581.6)"/><rect x="859.0" y="414.3" width="11" height="8.5" rx="2" transform="rotate(26 864.5 418.5)"/><rect x="853.1" y="426.4" width="11" height="8.5" rx="2" transform="rotate(26 858.6 430.6)"/><rect x="847.2" y="438.5" width="11" height="8.5" rx="2" transform="rotate(26 852.7 442.8)"/><rect x="841.3" y="450.7" width="11" height="8.5" rx="2" transform="rotate(26 846.8 454.9)"/><rect x="835.3" y="462.8" width="11" height="8.5" rx="2" transform="rotate(26 840.8 467.0)"/><rect x="829.4" y="474.9" width="11" height="8.5" rx="2" transform="rotate(26 834.9 479.2)"/><rect x="823.5" y="487.1" width="11" height="8.5" rx="2" transform="rotate(26 829.0 491.3)"/><rect x="817.6" y="499.2" width="11" height="8.5" rx="2" transform="rotate(26 823.1 503.4)"/><rect x="811.7" y="511.3" width="11" height="8.5" rx="2" transform="rotate(26 817.2 515.6)"/><rect x="805.8" y="523.5" width="11" height="8.5" rx="2" transform="rotate(26 811.3 527.7)"/><rect x="799.8" y="535.6" width="11" height="8.5" rx="2" transform="rotate(26 805.3 539.8)"/><rect x="793.9" y="547.7" width="11" height="8.5" rx="2" transform="rotate(26 799.4 552.0)"/><rect x="788.0" y="559.9" width="11" height="8.5" rx="2" transform="rotate(26 793.5 564.1)"/><rect x="782.1" y="572.0" width="11" height="8.5" rx="2" transform="rotate(26 787.6 576.2)"/><rect x="776.2" y="584.1" width="11" height="8.5" rx="2" transform="rotate(26 781.7 588.4)"/><rect x="872.9" y="421.1" width="11" height="8.5" rx="2" transform="rotate(26 878.4 425.3)"/><rect x="867.0" y="433.2" width="11" height="8.5" rx="2" transform="rotate(26 872.5 437.4)"/><rect x="861.1" y="445.3" width="11" height="8.5" rx="2" transform="rotate(26 866.6 449.6)"/><rect x="855.2" y="457.5" width="11" height="8.5" rx="2" transform="rotate(26 860.7 461.7)"/><rect x="849.3" y="469.6" width="11" height="8.5" rx="2" transform="rotate(26 854.8 473.8)"/><rect x="843.4" y="481.7" width="11" height="8.5" rx="2" transform="rotate(26 848.9 486.0)"/><rect x="837.4" y="493.9" width="11" height="8.5" rx="2" transform="rotate(26 842.9 498.1)"/><rect x="831.5" y="506.0" width="11" height="8.5" rx="2" transform="rotate(26 837.0 510.2)"/><rect x="825.6" y="518.1" width="11" height="8.5" rx="2" transform="rotate(26 831.1 522.4)"/><rect x="819.7" y="530.3" width="11" height="8.5" rx="2" transform="rotate(26 825.2 534.5)"/><rect x="813.8" y="542.4" width="11" height="8.5" rx="2" transform="rotate(26 819.3 546.6)"/><rect x="807.8" y="554.5" width="11" height="8.5" rx="2" transform="rotate(26 813.3 558.8)"/><rect x="801.9" y="566.7" width="11" height="8.5" rx="2" transform="rotate(26 807.4 570.9)"/><rect x="796.0" y="578.8" width="11" height="8.5" rx="2" transform="rotate(26 801.5 583.0)"/><rect x="790.1" y="590.9" width="11" height="8.5" rx="2" transform="rotate(26 795.6 595.2)"/><rect x="886.9" y="427.9" width="11" height="8.5" rx="2" transform="rotate(26 892.4 432.1)"/><rect x="881.0" y="440.0" width="11" height="8.5" rx="2" transform="rotate(26 886.5 444.2)"/><rect x="875.0" y="452.1" width="11" height="8.5" rx="2" transform="rotate(26 880.5 456.4)"/><rect x="869.1" y="464.3" width="11" height="8.5" rx="2" transform="rotate(26 874.6 468.5)"/><rect x="863.2" y="476.4" width="11" height="8.5" rx="2" transform="rotate(26 868.7 480.6)"/><rect x="857.3" y="488.5" width="11" height="8.5" rx="2" transform="rotate(26 862.8 492.8)"/><rect x="851.4" y="500.7" width="11" height="8.5" rx="2" transform="rotate(26 856.9 504.9)"/><rect x="845.5" y="512.8" width="11" height="8.5" rx="2" transform="rotate(26 851.0 517.0)"/><rect x="839.5" y="524.9" width="11" height="8.5" rx="2" transform="rotate(26 845.0 529.2)"/><rect x="833.6" y="537.1" width="11" height="8.5" rx="2" transform="rotate(26 839.1 541.3)"/><rect x="827.7" y="549.2" width="11" height="8.5" rx="2" transform="rotate(26 833.2 553.4)"/><rect x="821.8" y="561.3" width="11" height="8.5" rx="2" transform="rotate(26 827.3 565.6)"/><rect x="815.9" y="573.5" width="11" height="8.5" rx="2" transform="rotate(26 821.4 577.7)"/><rect x="809.9" y="585.6" width="11" height="8.5" rx="2" transform="rotate(26 815.4 589.8)"/><rect x="804.0" y="597.7" width="11" height="8.5" rx="2" transform="rotate(26 809.5 602.0)"/><rect x="900.8" y="434.6" width="11" height="8.5" rx="2" transform="rotate(26 906.3 438.9)"/><rect x="894.9" y="446.8" width="11" height="8.5" rx="2" transform="rotate(26 900.4 451.0)"/><rect x="889.0" y="458.9" width="11" height="8.5" rx="2" transform="rotate(26 894.5 463.2)"/><rect x="883.1" y="471.0" width="11" height="8.5" rx="2" transform="rotate(26 888.6 475.3)"/><rect x="877.1" y="483.2" width="11" height="8.5" rx="2" transform="rotate(26 882.6 487.4)"/><rect x="871.2" y="495.3" width="11" height="8.5" rx="2" transform="rotate(26 876.7 499.6)"/><rect x="865.3" y="507.4" width="11" height="8.5" rx="2" transform="rotate(26 870.8 511.7)"/><rect x="859.4" y="519.6" width="11" height="8.5" rx="2" transform="rotate(26 864.9 523.8)"/><rect x="853.5" y="531.7" width="11" height="8.5" rx="2" transform="rotate(26 859.0 536.0)"/><rect x="847.5" y="543.8" width="11" height="8.5" rx="2" transform="rotate(26 853.0 548.1)"/><rect x="841.6" y="556.0" width="11" height="8.5" rx="2" transform="rotate(26 847.1 560.2)"/><rect x="835.7" y="568.1" width="11" height="8.5" rx="2" transform="rotate(26 841.2 572.4)"/><rect x="829.8" y="580.2" width="11" height="8.5" rx="2" transform="rotate(26 835.3 584.5)"/><rect x="823.9" y="592.4" width="11" height="8.5" rx="2" transform="rotate(26 829.4 596.6)"/><rect x="818.0" y="604.5" width="11" height="8.5" rx="2" transform="rotate(26 823.5 608.8)"/><rect x="914.7" y="441.4" width="11" height="8.5" rx="2" transform="rotate(26 920.2 445.7)"/><rect x="908.8" y="453.6" width="11" height="8.5" rx="2" transform="rotate(26 914.3 457.8)"/><rect x="902.9" y="465.7" width="11" height="8.5" rx="2" transform="rotate(26 908.4 470.0)"/><rect x="897.0" y="477.8" width="11" height="8.5" rx="2" transform="rotate(26 902.5 482.1)"/><rect x="891.1" y="490.0" width="11" height="8.5" rx="2" transform="rotate(26 896.6 494.2)"/><rect x="885.1" y="502.1" width="11" height="8.5" rx="2" transform="rotate(26 890.6 506.4)"/><rect x="879.2" y="514.2" width="11" height="8.5" rx="2" transform="rotate(26 884.7 518.5)"/><rect x="873.3" y="526.4" width="11" height="8.5" rx="2" transform="rotate(26 878.8 530.6)"/><rect x="867.4" y="538.5" width="11" height="8.5" rx="2" transform="rotate(26 872.9 542.8)"/><rect x="861.5" y="550.6" width="11" height="8.5" rx="2" transform="rotate(26 867.0 554.9)"/><rect x="855.6" y="562.8" width="11" height="8.5" rx="2" transform="rotate(26 861.1 567.0)"/><rect x="849.6" y="574.9" width="11" height="8.5" rx="2" transform="rotate(26 855.1 579.2)"/><rect x="843.7" y="587.0" width="11" height="8.5" rx="2" transform="rotate(26 849.2 591.3)"/><rect x="837.8" y="599.2" width="11" height="8.5" rx="2" transform="rotate(26 843.3 603.4)"/><rect x="831.9" y="611.3" width="11" height="8.5" rx="2" transform="rotate(26 837.4 615.6)"/><rect x="928.7" y="448.2" width="11" height="8.5" rx="2" transform="rotate(26 934.2 452.5)"/><rect x="922.8" y="460.4" width="11" height="8.5" rx="2" transform="rotate(26 928.3 464.6)"/><rect x="916.8" y="472.5" width="11" height="8.5" rx="2" transform="rotate(26 922.3 476.8)"/><rect x="910.9" y="484.6" width="11" height="8.5" rx="2" transform="rotate(26 916.4 488.9)"/><rect x="905.0" y="496.8" width="11" height="8.5" rx="2" transform="rotate(26 910.5 501.0)"/><rect x="899.1" y="508.9" width="11" height="8.5" rx="2" transform="rotate(26 904.6 513.2)"/><rect x="893.2" y="521.0" width="11" height="8.5" rx="2" transform="rotate(26 898.7 525.3)"/><rect x="887.2" y="533.2" width="11" height="8.5" rx="2" transform="rotate(26 892.7 537.4)"/><rect x="881.3" y="545.3" width="11" height="8.5" rx="2" transform="rotate(26 886.8 549.6)"/><rect x="875.4" y="557.4" width="11" height="8.5" rx="2" transform="rotate(26 880.9 561.7)"/><rect x="869.5" y="569.6" width="11" height="8.5" rx="2" transform="rotate(26 875.0 573.8)"/><rect x="863.6" y="581.7" width="11" height="8.5" rx="2" transform="rotate(26 869.1 586.0)"/><rect x="857.7" y="593.8" width="11" height="8.5" rx="2" transform="rotate(26 863.2 598.1)"/><rect x="851.7" y="606.0" width="11" height="8.5" rx="2" transform="rotate(26 857.2 610.2)"/><rect x="845.8" y="618.1" width="11" height="8.5" rx="2" transform="rotate(26 851.3 622.4)"/><rect x="942.6" y="455.0" width="11" height="8.5" rx="2" transform="rotate(26 948.1 459.3)"/><rect x="936.7" y="467.2" width="11" height="8.5" rx="2" transform="rotate(26 942.2 471.4)"/><rect x="930.8" y="479.3" width="11" height="8.5" rx="2" transform="rotate(26 936.3 483.5)"/><rect x="924.8" y="491.4" width="11" height="8.5" rx="2" transform="rotate(26 930.3 495.7)"/><rect x="918.9" y="503.6" width="11" height="8.5" rx="2" transform="rotate(26 924.4 507.8)"/><rect x="913.0" y="515.7" width="11" height="8.5" rx="2" transform="rotate(26 918.5 519.9)"/><rect x="907.1" y="527.8" width="11" height="8.5" rx="2" transform="rotate(26 912.6 532.1)"/><rect x="901.2" y="540.0" width="11" height="8.5" rx="2" transform="rotate(26 906.7 544.2)"/><rect x="895.3" y="552.1" width="11" height="8.5" rx="2" transform="rotate(26 900.8 556.3)"/><rect x="889.3" y="564.2" width="11" height="8.5" rx="2" transform="rotate(26 894.8 568.5)"/><rect x="883.4" y="576.4" width="11" height="8.5" rx="2" transform="rotate(26 888.9 580.6)"/><rect x="877.5" y="588.5" width="11" height="8.5" rx="2" transform="rotate(26 883.0 592.8)"/><rect x="871.6" y="600.6" width="11" height="8.5" rx="2" transform="rotate(26 877.1 604.9)"/><rect x="865.7" y="612.8" width="11" height="8.5" rx="2" transform="rotate(26 871.2 617.0)"/><rect x="859.7" y="624.9" width="11" height="8.5" rx="2" transform="rotate(26 865.2 629.2)"/></g>
<path d="M779 442 V435 Q782 431 785 435 V442"/>
<path d="M806 436 V428 Q808 424 811 426 V436"/>
<!-- platform / step -->
<path d="M802 421 H848 L858 425 M802 426 H846 M802 421 V432 M803 432 L858 444"/>
<path d="M812 438 L860 452 L940 454 M860 452 V486 M870 452 V486"/>
<circle cx="865" cy="459" r="1" fill="#222"/><circle cx="865" cy="473" r="1" fill="#222"/>
<path d="M911 340 V432 M904 425 L940 431 M904 429 L940 435 M895 404 V421"/>
<path d="M918 453 H935 V468 H918 Z"/><circle cx="924" cy="458" r="1" fill="#222"/><circle cx="930" cy="461" r="1" fill="#222"/>
<path d="M930 468 L945 480"/>
<!-- handrail tube -->
<path d="M837 330 V428 Q839 448 858 456 Q878 464 880 478 V486"/>
<path d="M843 330 V426 Q845 443 862 450 Q884 459 886 476 V486"/>
<path d="M837 330 Q837 325 840 325 Q843 325 843 330"/>
<path d="M846 333 V420 M848.5 335 V420"/>
<!-- left frame post -->
<path d="M816.8 320 L821.5 420 M822.5 320 L829 420"/>
<!-- lamp housing -->
<path d="M810 330 Q810 325.5 814 325.5 Q818 325.5 818.5 329 L819 348 H811 Q810 348 810 346 Z"/>
<path d="M829 327 Q826 333 829 338 Q832 342 835 339 M831 330 Q834 327 836 326"/>
<!-- horizontal loop rail -->
<path d="M837 344.9 L801 349.5 Q797 350.5 797.6 353.5 Q798.5 356.5 802 358 L815 363.5 Q820 366 822 370"/>
<path d="M837 348 L803 352.6 Q800.5 353.5 801 355 Q801.8 356 804 357 L816 361.5"/>
<!-- reflector bracket -->
<path d="M797.6 373 Q797.6 372.5 798.5 372.5 H809.5 V378 H797.6 Z M799.5 376 L803 374.5"/>
<path d="M797.6 381 H818 V390.5 H797.6 Z M800 385.5 H814 M800 385.5 L802 384 M800 385.5 L802 387"/>
<path d="M809.5 378 H816 V381"/>
<path d="M803 392 H836 Q839 391 839 387 V382 M803 394.5 H837 Q841.5 393.5 841.5 388"/>
<path d="M809 396 Q809 400 813 400 Q817 400 817 396"/>
<!-- window frame right -->
<path d="M884.5 340 V415 M890 318 V417 M887 318 V415"/>
<path d="M884.5 340 Q886 330 896 322 M880 318 Q874 326 872 340"/>
<!-- glass reflections -->
<path d="M859 348 L867 327 M862 352 L871 333 M864 341 L868 333 M862 392 L869 372 M866 395 L873 378 M868 385 L871 378"/>
<!-- handle -->
<path d="M870 356 Q868 352 873 349 L880 347 Q883 347 882 350 L876 354 Q872 357 870 356 Z"/>
<!-- vent -->
<path d="M894 357 L908 353 V402 L894 402 Z"/><path d="M894 357.0 L908 353.0" stroke-width="1"/><path d="M894 359.2 L908 355.2" stroke-width="1"/><path d="M894 361.4 L908 357.4" stroke-width="1"/><path d="M894 363.6 L908 359.6" stroke-width="1"/><path d="M894 365.8 L908 361.8" stroke-width="1"/><path d="M894 368.0 L908 364.0" stroke-width="1"/><path d="M894 370.2 L908 366.2" stroke-width="1"/><path d="M894 372.4 L908 368.4" stroke-width="1"/><path d="M894 374.6 L908 370.6" stroke-width="1"/><path d="M894 376.8 L908 372.8" stroke-width="1"/><path d="M894 379.0 L908 375.0" stroke-width="1"/><path d="M894 381.2 L908 377.2" stroke-width="1"/><path d="M894 383.4 L908 379.4" stroke-width="1"/><path d="M894 385.6 L908 381.6" stroke-width="1"/><path d="M894 387.8 L908 383.8" stroke-width="1"/><path d="M894 390.0 L908 386.0" stroke-width="1"/><path d="M894 392.2 L908 388.2" stroke-width="1"/><path d="M894 394.4 L908 390.4" stroke-width="1"/><path d="M894 396.6 L908 392.6" stroke-width="1"/><path d="M894 398.8 L908 394.8" stroke-width="1"/><path d="M894 401.0 L908 397.0" stroke-width="1"/><path d="M894 403.2 L908 399.2" stroke-width="1"/>
<!-- right diagonal lines -->
<path d="M908 379 L941 361 M909 383 L941 366"/>
<!-- upper right pillar -->
<path d="M898 318 V338 Q898 342 902 341 L911 339 V322 M906 328 L929 318.5 M908 331 L931 321 M911 336 L922 330"/>
<path d="M846 416 H884.5"/>
<path d="M846 421 H884 M890 417 Q890 421 895 421 H904"/>
</g>
<path d="M797.5 388.8 L773 394 L774.2 396.9 L752.3 403.9 L758.1 415.6 L776.8 403.4 L778.3 405.7 Z" fill="#000"/>
<g fill="#222"><circle cx="849" cy="361" r="1.1"/><circle cx="849" cy="364.5" r="1.1"/></g>
</svg>
<svg class="a" style="left:699px;top:500px" width="267" height="170" viewBox="699 500 267 170">
<g fill="none" stroke="#2a2a2a" stroke-width="0.85" stroke-linecap="round" stroke-linejoin="round">
<!-- diagonal left double line -->
<path d="M724 528 L767 559 M724 533 L765 563"/>
<!-- left pillar -->
<path d="M760 503 Q763 550 768 612 M772 503 Q774 560 779 612 M762 515 L772 520 M766 531 L775 534"/>
<!-- rod -->
<path d="M778 503 V518 Q778 522 775.5 521 M780 503 V519 M778.5 520 L790 612"/>
<!-- glass -->
<path d="M789 537 L802 513 M796 535 L805 520 M792 573 L805 550 M797 571 L806 557 M801 568 L806 560"/>
<!-- right window frame -->
<path d="M815.7 503 V612 M819.5 503 V612 M817 503 V610"/>
<!-- upper hood -->
<path d="M838 503 Q841 512 839.5 517 Q837 521 830 521 Q825 522.5 821 523.5 M828 513 Q824 513 822 516 M821 523.5 Q818 526 822 527.5"/>
<!-- window bottom frame -->
<path d="M768 612 H819 V620 H768 M790 600 H819"/>
<!-- handrail -->
<path d="M837.8 626 V545 Q838 536 843 536 Q848 537 851.7 550 V626"/>
<path d="M841.8 626 V548 Q842 541 844 541 Q847.5 542 848.8 552 V626"/>
<!-- lamp bracket -->
<path d="M851.5 558.5 H862.4 M851.5 561.5 H862.4 M862.4 555.5 Q862.4 555 863 555 H874.6 V562.8 H862.4 Z M864.5 560.5 L868 558 M852.4 564.3 H874.6 V574.3 H852.4 Z M854.5 569.5 H872.5 M854.5 569.5 L856.5 568 M872.5 569.5 L870.5 568 M851.6 574.3 V582.7 H855.5 V574.3"/>
<!-- platform -->
<path d="M724 620 L770 612 M724 624 L770 616 M724 628 L770 620 M724 620 V638"/>
<path d="M727 634 L819 615 L843 620 M724 638 Q800 636 812 633 Q826 628 837 626 M720 640 L810 635"/>
<circle cx="738" cy="634" r="1" fill="#222"/><circle cx="779" cy="628" r="1" fill="#222"/><circle cx="823" cy="625" r="1" fill="#222"/><circle cx="729" cy="641" r="1.2" fill="#222"/><circle cx="807" cy="638" r="1.2" fill="#222"/><circle cx="807" cy="665" r="1" fill="#222"/>
<path d="M811 635 V668 M814 634 V668 M834 625 V668 M837 624 V668 M814 668 L834 655"/>
<path d="M862 612 V624 L870 622 M850 612 L860 606"/>
<!-- tire -->
<path d="M845 672 Q846 640 860 626 Q880 614 906 626 Q915 640 914 672"/>
<path d="M878 614 Q878 609 881 609 Q884 609 884 614"/>
<clipPath id="tc2"><ellipse cx="880" cy="676" rx="34" ry="52"/></clipPath><g clip-path="url(#tc2)" fill="#fff" stroke="#222" stroke-width="0.9"><rect x="837.1" y="548.7" width="10" height="8" rx="1.8" transform="rotate(32 842.1 552.7)"/><rect x="830.5" y="559.3" width="10" height="8" rx="1.8" transform="rotate(32 835.5 563.3)"/><rect x="823.8" y="569.9" width="10" height="8" rx="1.8" transform="rotate(32 828.8 573.9)"/><rect x="817.2" y="580.5" width="10" height="8" rx="1.8" transform="rotate(32 822.2 584.5)"/><rect x="810.6" y="591.1" width="10" height="8" rx="1.8" transform="rotate(32 815.6 595.1)"/><rect x="804.0" y="601.7" width="10" height="8" rx="1.8" transform="rotate(32 809.0 605.7)"/><rect x="797.3" y="612.3" width="10" height="8" rx="1.8" transform="rotate(32 802.3 616.3)"/><rect x="790.7" y="622.9" width="10" height="8" rx="1.8" transform="rotate(32 795.7 626.9)"/><rect x="784.1" y="633.5" width="10" height="8" rx="1.8" transform="rotate(32 789.1 637.5)"/><rect x="777.5" y="644.1" width="10" height="8" rx="1.8" transform="rotate(32 782.5 648.1)"/><rect x="770.9" y="654.7" width="10" height="8" rx="1.8" transform="rotate(32 775.9 658.7)"/><rect x="764.2" y="665.3" width="10" height="8" rx="1.8" transform="rotate(32 769.2 669.3)"/><rect x="757.6" y="675.9" width="10" height="8" rx="1.8" transform="rotate(32 762.6 679.9)"/><rect x="751.0" y="686.5" width="10" height="8" rx="1.8" transform="rotate(32 756.0 690.5)"/><rect x="744.4" y="697.1" width="10" height="8" rx="1.8" transform="rotate(32 749.4 701.1)"/><rect x="849.4" y="556.4" width="10" height="8" rx="1.8" transform="rotate(32 854.4 560.4)"/><rect x="842.8" y="567.0" width="10" height="8" rx="1.8" transform="rotate(32 847.8 571.0)"/><rect x="836.1" y="577.6" width="10" height="8" rx="1.8" transform="rotate(32 841.1 581.6)"/><rect x="829.5" y="588.2" width="10" height="8" rx="1.8" transform="rotate(32 834.5 592.2)"/><rect x="822.9" y="598.8" width="10" height="8" rx="1.8" transform="rotate(32 827.9 602.8)"/><rect x="816.3" y="609.4" width="10" height="8" rx="1.8" transform="rotate(32 821.3 613.4)"/><rect x="809.6" y="620.0" width="10" height="8" rx="1.8" transform="rotate(32 814.6 624.0)"/><rect x="803.0" y="630.6" width="10" height="8" rx="1.8" transform="rotate(32 808.0 634.6)"/><rect x="796.4" y="641.2" width="10" height="8" rx="1.8" transform="rotate(32 801.4 645.2)"/><rect x="789.8" y="651.8" width="10" height="8" rx="1.8" transform="rotate(32 794.8 655.8)"/><rect x="783.2" y="662.4" width="10" height="8" rx="1.8" transform="rotate(32 788.2 666.4)"/><rect x="776.5" y="673.0" width="10" height="8" rx="1.8" transform="rotate(32 781.5 677.0)"/><rect x="769.9" y="683.6" width="10" height="8" rx="1.8" transform="rotate(32 774.9 687.6)"/><rect x="763.3" y="694.2" width="10" height="8" rx="1.8" transform="rotate(32 768.3 698.2)"/><rect x="756.7" y="704.8" width="10" height="8" rx="1.8" transform="rotate(32 761.7 708.8)"/><rect x="861.7" y="564.0" width="10" height="8" rx="1.8" transform="rotate(32 866.7 568.0)"/><rect x="855.1" y="574.6" width="10" height="8" rx="1.8" transform="rotate(32 860.1 578.6)"/><rect x="848.4" y="585.2" width="10" height="8" rx="1.8" transform="rotate(32 853.4 589.2)"/><rect x="841.8" y="595.8" width="10" height="8" rx="1.8" transform="rotate(32 846.8 599.8)"/><rect x="835.2" y="606.4" width="10" height="8" rx="1.8" transform="rotate(32 840.2 610.4)"/><rect x="828.6" y="617.0" width="10" height="8" rx="1.8" transform="rotate(32 833.6 621.0)"/><rect x="821.9" y="627.6" width="10" height="8" rx="1.8" transform="rotate(32 826.9 631.6)"/><rect x="815.3" y="638.2" width="10" height="8" rx="1.8" transform="rotate(32 820.3 642.2)"/><rect x="808.7" y="648.8" width="10" height="8" rx="1.8" transform="rotate(32 813.7 652.8)"/><rect x="802.1" y="659.4" width="10" height="8" rx="1.8" transform="rotate(32 807.1 663.4)"/><rect x="795.4" y="670.0" width="10" height="8" rx="1.8" transform="rotate(32 800.4 674.0)"/><rect x="788.8" y="680.6" width="10" height="8" rx="1.8" transform="rotate(32 793.8 684.6)"/><rect x="782.2" y="691.2" width="10" height="8" rx="1.8" transform="rotate(32 787.2 695.2)"/><rect x="775.6" y="701.8" width="10" height="8" rx="1.8" transform="rotate(32 780.6 705.8)"/><rect x="769.0" y="712.4" width="10" height="8" rx="1.8" transform="rotate(32 774.0 716.4)"/><rect x="874.0" y="571.7" width="10" height="8" rx="1.8" transform="rotate(32 879.0 575.7)"/><rect x="867.4" y="582.3" width="10" height="8" rx="1.8" transform="rotate(32 872.4 586.3)"/><rect x="860.7" y="592.9" width="10" height="8" rx="1.8" transform="rotate(32 865.7 596.9)"/><rect x="854.1" y="603.5" width="10" height="8" rx="1.8" transform="rotate(32 859.1 607.5)"/><rect x="847.5" y="614.1" width="10" height="8" rx="1.8" transform="rotate(32 852.5 618.1)"/><rect x="840.9" y="624.7" width="10" height="8" rx="1.8" transform="rotate(32 845.9 628.7)"/><rect x="834.2" y="635.3" width="10" height="8" rx="1.8" transform="rotate(32 839.2 639.3)"/><rect x="827.6" y="645.9" width="10" height="8" rx="1.8" transform="rotate(32 832.6 649.9)"/><rect x="821.0" y="656.5" width="10" height="8" rx="1.8" transform="rotate(32 826.0 660.5)"/><rect x="814.4" y="667.1" width="10" height="8" rx="1.8" transform="rotate(32 819.4 671.1)"/><rect x="807.7" y="677.7" width="10" height="8" rx="1.8" transform="rotate(32 812.7 681.7)"/><rect x="801.1" y="688.3" width="10" height="8" rx="1.8" transform="rotate(32 806.1 692.3)"/><rect x="794.5" y="698.9" width="10" height="8" rx="1.8" transform="rotate(32 799.5 702.9)"/><rect x="787.9" y="709.5" width="10" height="8" rx="1.8" transform="rotate(32 792.9 713.5)"/><rect x="781.2" y="720.1" width="10" height="8" rx="1.8" transform="rotate(32 786.2 724.1)"/><rect x="886.3" y="579.4" width="10" height="8" rx="1.8" transform="rotate(32 891.3 583.4)"/><rect x="879.7" y="590.0" width="10" height="8" rx="1.8" transform="rotate(32 884.7 594.0)"/><rect x="873.0" y="600.6" width="10" height="8" rx="1.8" transform="rotate(32 878.0 604.6)"/><rect x="866.4" y="611.2" width="10" height="8" rx="1.8" transform="rotate(32 871.4 615.2)"/><rect x="859.8" y="621.8" width="10" height="8" rx="1.8" transform="rotate(32 864.8 625.8)"/><rect x="853.2" y="632.4" width="10" height="8" rx="1.8" transform="rotate(32 858.2 636.4)"/><rect x="846.5" y="643.0" width="10" height="8" rx="1.8" transform="rotate(32 851.5 647.0)"/><rect x="839.9" y="653.6" width="10" height="8" rx="1.8" transform="rotate(32 844.9 657.6)"/><rect x="833.3" y="664.2" width="10" height="8" rx="1.8" transform="rotate(32 838.3 668.2)"/><rect x="826.7" y="674.8" width="10" height="8" rx="1.8" transform="rotate(32 831.7 678.8)"/><rect x="820.0" y="685.4" width="10" height="8" rx="1.8" transform="rotate(32 825.0 689.4)"/><rect x="813.4" y="696.0" width="10" height="8" rx="1.8" transform="rotate(32 818.4 700.0)"/><rect x="806.8" y="706.6" width="10" height="8" rx="1.8" transform="rotate(32 811.8 710.6)"/><rect x="800.2" y="717.2" width="10" height="8" rx="1.8" transform="rotate(32 805.2 721.2)"/><rect x="793.5" y="727.8" width="10" height="8" rx="1.8" transform="rotate(32 798.5 731.8)"/><rect x="898.6" y="587.1" width="10" height="8" rx="1.8" transform="rotate(32 903.6 591.1)"/><rect x="892.0" y="597.7" width="10" height="8" rx="1.8" transform="rotate(32 897.0 601.7)"/><rect x="885.3" y="608.3" width="10" height="8" rx="1.8" transform="rotate(32 890.3 612.3)"/><rect x="878.7" y="618.9" width="10" height="8" rx="1.8" transform="rotate(32 883.7 622.9)"/><rect x="872.1" y="629.5" width="10" height="8" rx="1.8" transform="rotate(32 877.1 633.5)"/><rect x="865.5" y="640.1" width="10" height="8" rx="1.8" transform="rotate(32 870.5 644.1)"/><rect x="858.8" y="650.7" width="10" height="8" rx="1.8" transform="rotate(32 863.8 654.7)"/><rect x="852.2" y="661.3" width="10" height="8" rx="1.8" transform="rotate(32 857.2 665.3)"/><rect x="845.6" y="671.9" width="10" height="8" rx="1.8" transform="rotate(32 850.6 675.9)"/><rect x="839.0" y="682.5" width="10" height="8" rx="1.8" transform="rotate(32 844.0 686.5)"/><rect x="832.3" y="693.1" width="10" height="8" rx="1.8" transform="rotate(32 837.3 697.1)"/><rect x="825.7" y="703.7" width="10" height="8" rx="1.8" transform="rotate(32 830.7 707.7)"/><rect x="819.1" y="714.3" width="10" height="8" rx="1.8" transform="rotate(32 824.1 718.3)"/><rect x="812.5" y="724.9" width="10" height="8" rx="1.8" transform="rotate(32 817.5 728.9)"/><rect x="805.8" y="735.5" width="10" height="8" rx="1.8" transform="rotate(32 810.8 739.5)"/><rect x="910.9" y="594.8" width="10" height="8" rx="1.8" transform="rotate(32 915.9 598.8)"/><rect x="904.2" y="605.4" width="10" height="8" rx="1.8" transform="rotate(32 909.2 609.4)"/><rect x="897.6" y="616.0" width="10" height="8" rx="1.8" transform="rotate(32 902.6 620.0)"/><rect x="891.0" y="626.6" width="10" height="8" rx="1.8" transform="rotate(32 896.0 630.6)"/><rect x="884.4" y="637.2" width="10" height="8" rx="1.8" transform="rotate(32 889.4 641.2)"/><rect x="877.8" y="647.8" width="10" height="8" rx="1.8" transform="rotate(32 882.8 651.8)"/><rect x="871.1" y="658.4" width="10" height="8" rx="1.8" transform="rotate(32 876.1 662.4)"/><rect x="864.5" y="669.0" width="10" height="8" rx="1.8" transform="rotate(32 869.5 673.0)"/><rect x="857.9" y="679.6" width="10" height="8" rx="1.8" transform="rotate(32 862.9 683.6)"/><rect x="851.3" y="690.2" width="10" height="8" rx="1.8" transform="rotate(32 856.3 694.2)"/><rect x="844.6" y="700.8" width="10" height="8" rx="1.8" transform="rotate(32 849.6 704.8)"/><rect x="838.0" y="711.4" width="10" height="8" rx="1.8" transform="rotate(32 843.0 715.4)"/><rect x="831.4" y="722.0" width="10" height="8" rx="1.8" transform="rotate(32 836.4 726.0)"/><rect x="824.8" y="732.6" width="10" height="8" rx="1.8" transform="rotate(32 829.8 736.6)"/><rect x="818.1" y="743.2" width="10" height="8" rx="1.8" transform="rotate(32 823.1 747.2)"/><rect x="923.2" y="602.5" width="10" height="8" rx="1.8" transform="rotate(32 928.2 606.5)"/><rect x="916.5" y="613.1" width="10" height="8" rx="1.8" transform="rotate(32 921.5 617.1)"/><rect x="909.9" y="623.7" width="10" height="8" rx="1.8" transform="rotate(32 914.9 627.7)"/><rect x="903.3" y="634.3" width="10" height="8" rx="1.8" transform="rotate(32 908.3 638.3)"/><rect x="896.7" y="644.9" width="10" height="8" rx="1.8" transform="rotate(32 901.7 648.9)"/><rect x="890.1" y="655.5" width="10" height="8" rx="1.8" transform="rotate(32 895.1 659.5)"/><rect x="883.4" y="666.1" width="10" height="8" rx="1.8" transform="rotate(32 888.4 670.1)"/><rect x="876.8" y="676.7" width="10" height="8" rx="1.8" transform="rotate(32 881.8 680.7)"/><rect x="870.2" y="687.3" width="10" height="8" rx="1.8" transform="rotate(32 875.2 691.3)"/><rect x="863.6" y="697.9" width="10" height="8" rx="1.8" transform="rotate(32 868.6 701.9)"/><rect x="856.9" y="708.5" width="10" height="8" rx="1.8" transform="rotate(32 861.9 712.5)"/><rect x="850.3" y="719.1" width="10" height="8" rx="1.8" transform="rotate(32 855.3 723.1)"/><rect x="843.7" y="729.7" width="10" height="8" rx="1.8" transform="rotate(32 848.7 733.7)"/><rect x="837.1" y="740.3" width="10" height="8" rx="1.8" transform="rotate(32 842.1 744.3)"/><rect x="830.4" y="750.9" width="10" height="8" rx="1.8" transform="rotate(32 835.4 754.9)"/><rect x="935.5" y="610.1" width="10" height="8" rx="1.8" transform="rotate(32 940.5 614.1)"/><rect x="928.8" y="620.7" width="10" height="8" rx="1.8" transform="rotate(32 933.8 624.7)"/><rect x="922.2" y="631.3" width="10" height="8" rx="1.8" transform="rotate(32 927.2 635.3)"/><rect x="915.6" y="641.9" width="10" height="8" rx="1.8" transform="rotate(32 920.6 645.9)"/><rect x="909.0" y="652.5" width="10" height="8" rx="1.8" transform="rotate(32 914.0 656.5)"/><rect x="902.3" y="663.1" width="10" height="8" rx="1.8" transform="rotate(32 907.3 667.1)"/><rect x="895.7" y="673.7" width="10" height="8" rx="1.8" transform="rotate(32 900.7 677.7)"/><rect x="889.1" y="684.3" width="10" height="8" rx="1.8" transform="rotate(32 894.1 688.3)"/><rect x="882.5" y="694.9" width="10" height="8" rx="1.8" transform="rotate(32 887.5 698.9)"/><rect x="875.9" y="705.5" width="10" height="8" rx="1.8" transform="rotate(32 880.9 709.5)"/><rect x="869.2" y="716.1" width="10" height="8" rx="1.8" transform="rotate(32 874.2 720.1)"/><rect x="862.6" y="726.8" width="10" height="8" rx="1.8" transform="rotate(32 867.6 730.8)"/><rect x="856.0" y="737.4" width="10" height="8" rx="1.8" transform="rotate(32 861.0 741.4)"/><rect x="849.4" y="748.0" width="10" height="8" rx="1.8" transform="rotate(32 854.4 752.0)"/><rect x="842.7" y="758.6" width="10" height="8" rx="1.8" transform="rotate(32 847.7 762.6)"/><rect x="947.8" y="617.8" width="10" height="8" rx="1.8" transform="rotate(32 952.8 621.8)"/><rect x="941.1" y="628.4" width="10" height="8" rx="1.8" transform="rotate(32 946.1 632.4)"/><rect x="934.5" y="639.0" width="10" height="8" rx="1.8" transform="rotate(32 939.5 643.0)"/><rect x="927.9" y="649.6" width="10" height="8" rx="1.8" transform="rotate(32 932.9 653.6)"/><rect x="921.3" y="660.2" width="10" height="8" rx="1.8" transform="rotate(32 926.3 664.2)"/><rect x="914.6" y="670.8" width="10" height="8" rx="1.8" transform="rotate(32 919.6 674.8)"/><rect x="908.0" y="681.4" width="10" height="8" rx="1.8" transform="rotate(32 913.0 685.4)"/><rect x="901.4" y="692.0" width="10" height="8" rx="1.8" transform="rotate(32 906.4 696.0)"/><rect x="894.8" y="702.6" width="10" height="8" rx="1.8" transform="rotate(32 899.8 706.6)"/><rect x="888.1" y="713.2" width="10" height="8" rx="1.8" transform="rotate(32 893.1 717.2)"/><rect x="881.5" y="723.8" width="10" height="8" rx="1.8" transform="rotate(32 886.5 727.8)"/><rect x="874.9" y="734.4" width="10" height="8" rx="1.8" transform="rotate(32 879.9 738.4)"/><rect x="868.3" y="745.0" width="10" height="8" rx="1.8" transform="rotate(32 873.3 749.0)"/><rect x="861.7" y="755.6" width="10" height="8" rx="1.8" transform="rotate(32 866.7 759.6)"/><rect x="855.0" y="766.2" width="10" height="8" rx="1.8" transform="rotate(32 860.0 770.2)"/><rect x="960.1" y="625.5" width="10" height="8" rx="1.8" transform="rotate(32 965.1 629.5)"/><rect x="953.4" y="636.1" width="10" height="8" rx="1.8" transform="rotate(32 958.4 640.1)"/><rect x="946.8" y="646.7" width="10" height="8" rx="1.8" transform="rotate(32 951.8 650.7)"/><rect x="940.2" y="657.3" width="10" height="8" rx="1.8" transform="rotate(32 945.2 661.3)"/><rect x="933.6" y="667.9" width="10" height="8" rx="1.8" transform="rotate(32 938.6 671.9)"/><rect x="926.9" y="678.5" width="10" height="8" rx="1.8" transform="rotate(32 931.9 682.5)"/><rect x="920.3" y="689.1" width="10" height="8" rx="1.8" transform="rotate(32 925.3 693.1)"/><rect x="913.7" y="699.7" width="10" height="8" rx="1.8" transform="rotate(32 918.7 703.7)"/><rect x="907.1" y="710.3" width="10" height="8" rx="1.8" transform="rotate(32 912.1 714.3)"/><rect x="900.4" y="720.9" width="10" height="8" rx="1.8" transform="rotate(32 905.4 724.9)"/><rect x="893.8" y="731.5" width="10" height="8" rx="1.8" transform="rotate(32 898.8 735.5)"/><rect x="887.2" y="742.1" width="10" height="8" rx="1.8" transform="rotate(32 892.2 746.1)"/><rect x="880.6" y="752.7" width="10" height="8" rx="1.8" transform="rotate(32 885.6 756.7)"/><rect x="873.9" y="763.3" width="10" height="8" rx="1.8" transform="rotate(32 878.9 767.3)"/><rect x="867.3" y="773.9" width="10" height="8" rx="1.8" transform="rotate(32 872.3 777.9)"/><rect x="972.4" y="633.2" width="10" height="8" rx="1.8" transform="rotate(32 977.4 637.2)"/><rect x="965.7" y="643.8" width="10" height="8" rx="1.8" transform="rotate(32 970.7 647.8)"/><rect x="959.1" y="654.4" width="10" height="8" rx="1.8" transform="rotate(32 964.1 658.4)"/><rect x="952.5" y="665.0" width="10" height="8" rx="1.8" transform="rotate(32 957.5 669.0)"/><rect x="945.9" y="675.6" width="10" height="8" rx="1.8" transform="rotate(32 950.9 679.6)"/><rect x="939.2" y="686.2" width="10" height="8" rx="1.8" transform="rotate(32 944.2 690.2)"/><rect x="932.6" y="696.8" width="10" height="8" rx="1.8" transform="rotate(32 937.6 700.8)"/><rect x="926.0" y="707.4" width="10" height="8" rx="1.8" transform="rotate(32 931.0 711.4)"/><rect x="919.4" y="718.0" width="10" height="8" rx="1.8" transform="rotate(32 924.4 722.0)"/><rect x="912.7" y="728.6" width="10" height="8" rx="1.8" transform="rotate(32 917.7 732.6)"/><rect x="906.1" y="739.2" width="10" height="8" rx="1.8" transform="rotate(32 911.1 743.2)"/><rect x="899.5" y="749.8" width="10" height="8" rx="1.8" transform="rotate(32 904.5 753.8)"/><rect x="892.9" y="760.4" width="10" height="8" rx="1.8" transform="rotate(32 897.9 764.4)"/><rect x="886.2" y="771.0" width="10" height="8" rx="1.8" transform="rotate(32 891.2 775.0)"/><rect x="879.6" y="781.6" width="10" height="8" rx="1.8" transform="rotate(32 884.6 785.6)"/><rect x="984.7" y="640.9" width="10" height="8" rx="1.8" transform="rotate(32 989.7 644.9)"/><rect x="978.0" y="651.5" width="10" height="8" rx="1.8" transform="rotate(32 983.0 655.5)"/><rect x="971.4" y="662.1" width="10" height="8" rx="1.8" transform="rotate(32 976.4 666.1)"/><rect x="964.8" y="672.7" width="10" height="8" rx="1.8" transform="rotate(32 969.8 676.7)"/><rect x="958.2" y="683.3" width="10" height="8" rx="1.8" transform="rotate(32 963.2 687.3)"/><rect x="951.5" y="693.9" width="10" height="8" rx="1.8" transform="rotate(32 956.5 697.9)"/><rect x="944.9" y="704.5" width="10" height="8" rx="1.8" transform="rotate(32 949.9 708.5)"/><rect x="938.3" y="715.1" width="10" height="8" rx="1.8" transform="rotate(32 943.3 719.1)"/><rect x="931.7" y="725.7" width="10" height="8" rx="1.8" transform="rotate(32 936.7 729.7)"/><rect x="925.0" y="736.3" width="10" height="8" rx="1.8" transform="rotate(32 930.0 740.3)"/><rect x="918.4" y="746.9" width="10" height="8" rx="1.8" transform="rotate(32 923.4 750.9)"/><rect x="911.8" y="757.5" width="10" height="8" rx="1.8" transform="rotate(32 916.8 761.5)"/><rect x="905.2" y="768.1" width="10" height="8" rx="1.8" transform="rotate(32 910.2 772.1)"/><rect x="898.5" y="778.7" width="10" height="8" rx="1.8" transform="rotate(32 903.5 782.7)"/><rect x="891.9" y="789.3" width="10" height="8" rx="1.8" transform="rotate(32 896.9 793.3)"/><rect x="997.0" y="648.6" width="10" height="8" rx="1.8" transform="rotate(32 1002.0 652.6)"/><rect x="990.3" y="659.2" width="10" height="8" rx="1.8" transform="rotate(32 995.3 663.2)"/><rect x="983.7" y="669.8" width="10" height="8" rx="1.8" transform="rotate(32 988.7 673.8)"/><rect x="977.1" y="680.4" width="10" height="8" rx="1.8" transform="rotate(32 982.1 684.4)"/><rect x="970.5" y="691.0" width="10" height="8" rx="1.8" transform="rotate(32 975.5 695.0)"/><rect x="963.8" y="701.6" width="10" height="8" rx="1.8" transform="rotate(32 968.8 705.6)"/><rect x="957.2" y="712.2" width="10" height="8" rx="1.8" transform="rotate(32 962.2 716.2)"/><rect x="950.6" y="722.8" width="10" height="8" rx="1.8" transform="rotate(32 955.6 726.8)"/><rect x="944.0" y="733.4" width="10" height="8" rx="1.8" transform="rotate(32 949.0 737.4)"/><rect x="937.3" y="744.0" width="10" height="8" rx="1.8" transform="rotate(32 942.3 748.0)"/><rect x="930.7" y="754.6" width="10" height="8" rx="1.8" transform="rotate(32 935.7 758.6)"/><rect x="924.1" y="765.2" width="10" height="8" rx="1.8" transform="rotate(32 929.1 769.2)"/><rect x="917.5" y="775.8" width="10" height="8" rx="1.8" transform="rotate(32 922.5 779.8)"/><rect x="910.8" y="786.4" width="10" height="8" rx="1.8" transform="rotate(32 915.8 790.4)"/><rect x="904.2" y="797.0" width="10" height="8" rx="1.8" transform="rotate(32 909.2 801.0)"/><rect x="1009.2" y="656.2" width="10" height="8" rx="1.8" transform="rotate(32 1014.2 660.2)"/><rect x="1002.6" y="666.8" width="10" height="8" rx="1.8" transform="rotate(32 1007.6 670.8)"/><rect x="996.0" y="677.4" width="10" height="8" rx="1.8" transform="rotate(32 1001.0 681.4)"/><rect x="989.4" y="688.0" width="10" height="8" rx="1.8" transform="rotate(32 994.4 692.0)"/><rect x="982.8" y="698.6" width="10" height="8" rx="1.8" transform="rotate(32 987.8 702.6)"/><rect x="976.1" y="709.2" width="10" height="8" rx="1.8" transform="rotate(32 981.1 713.2)"/><rect x="969.5" y="719.9" width="10" height="8" rx="1.8" transform="rotate(32 974.5 723.9)"/><rect x="962.9" y="730.5" width="10" height="8" rx="1.8" transform="rotate(32 967.9 734.5)"/><rect x="956.3" y="741.1" width="10" height="8" rx="1.8" transform="rotate(32 961.3 745.1)"/><rect x="949.6" y="751.7" width="10" height="8" rx="1.8" transform="rotate(32 954.6 755.7)"/><rect x="943.0" y="762.3" width="10" height="8" rx="1.8" transform="rotate(32 948.0 766.3)"/><rect x="936.4" y="772.9" width="10" height="8" rx="1.8" transform="rotate(32 941.4 776.9)"/><rect x="929.8" y="783.5" width="10" height="8" rx="1.8" transform="rotate(32 934.8 787.5)"/><rect x="923.1" y="794.1" width="10" height="8" rx="1.8" transform="rotate(32 928.1 798.1)"/><rect x="916.5" y="804.7" width="10" height="8" rx="1.8" transform="rotate(32 921.5 808.7)"/></g>
</g>
<path d="M873.4 572.4 L897.1 581.9 L896.4 585.2 L915.7 595.8 L907.7 606 L891.6 590.7 L889.8 592.8 Z" fill="#000"/>
</svg>
<div class="t" style="left:788.5px;top:69px;font-size:11.6px;letter-spacing:-0.12px">INTRODUCTION</div>
<div class="t" style="left:539.5px;top:117px;letter-spacing:0.045px">If the system is inoperable, the system must be repaired.</div>
<div class="t" style="left:565.8px;top:146.2px;font-size:14.2px;line-height:14px;font-weight:bold;letter-spacing:-0.18px">Power Take-Off (PTO)</div>
<div class="t" style="left:539.5px;top:176px;word-spacing:0.45px">PTO-driven machinery can cause death or serious injury.  Before working on or near the PTO shaft or servicing</div>
<div class="t" style="left:539.5px;top:190px;letter-spacing:-0.032px">clearing the driven machine, put the PTO switch in the disengage position, stop the engine, and remove the key.</div>
<div class="t" style="left:539.5px;top:214px;letter-spacing:-0.066px">Whenever a PTO is in operation, all guards must be in place to prevent death or injury to the operator or bystanders.</div>
<div class="t" style="left:565.3px;top:243.2px;font-size:14.2px;line-height:14px;font-weight:bold;letter-spacing:-0.18px">Reflectors and warning lights</div>
<div class="t" style="left:539.5px;top:273px;letter-spacing:0.015px">Reflectors are located on the handrails in the areas as shown in Figure <b>1</b>.</div>
<div class="t" style="left:539.5px;top:298px;letter-spacing:0.013px">Flashing amber warning lights must be used when operating on public roads.</div>
<div class="t" style="left:798.3px;top:490px;font-size:5.8px;line-height:7px;color:#2a2a2a;-webkit-text-stroke:0.25px #2a2a2a">NHIL14WR00278AA</div>
<div class="t" style="left:862.5px;top:489px;font-size:7px;line-height:8px;color:#222">1</div>
<div class="t" style="left:798.3px;top:674px;font-size:5.8px;line-height:7px;color:#2a2a2a;-webkit-text-stroke:0.25px #2a2a2a">NHIL14WR00279AA</div>
<div class="t" style="left:861.5px;top:673px;font-size:7px;line-height:8px;color:#222">2</div>

</body></html>
